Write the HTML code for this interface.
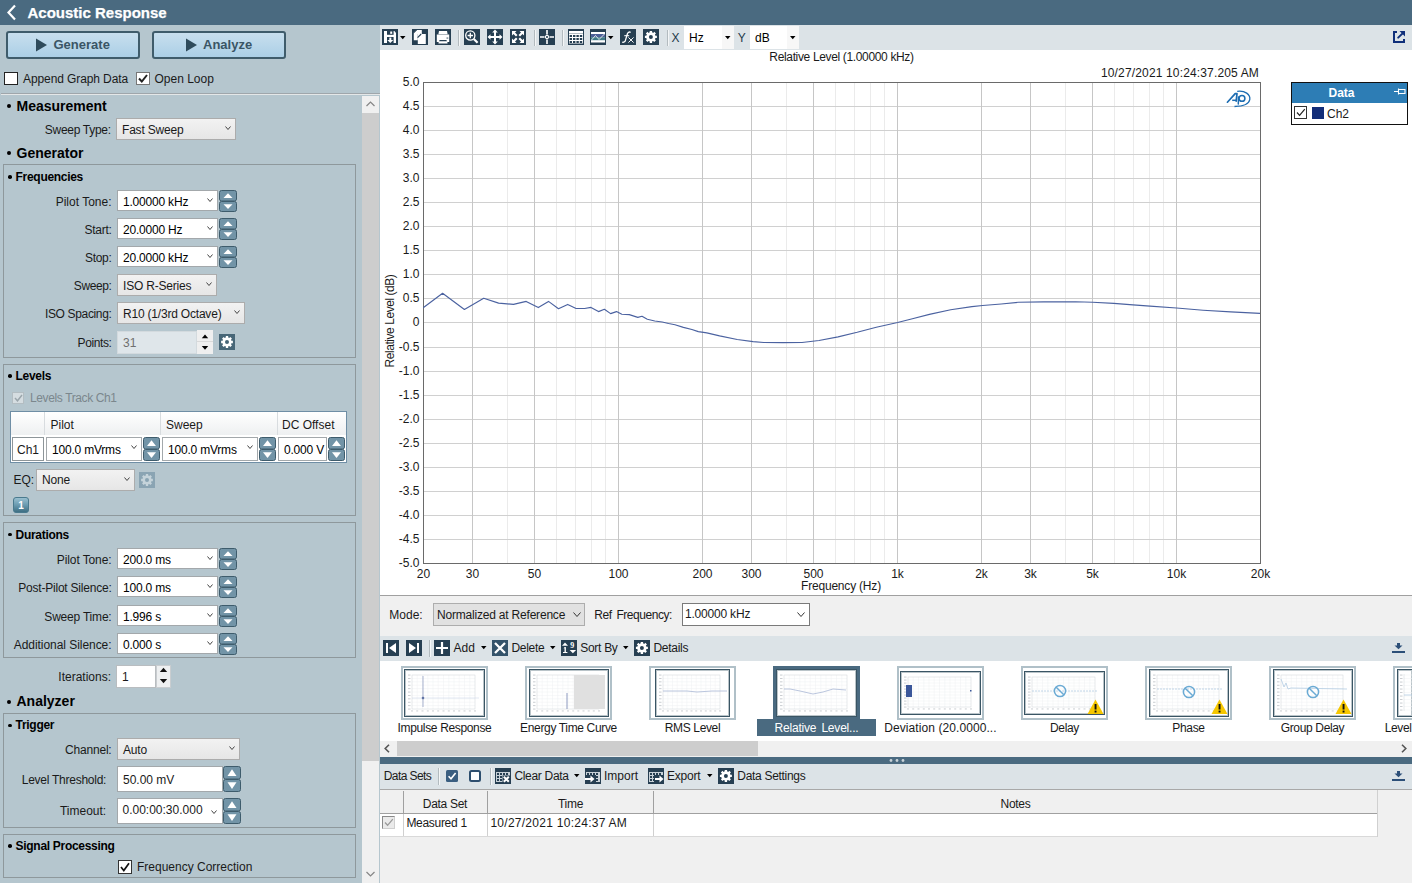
<!DOCTYPE html>
<html><head><meta charset="utf-8"><title>Acoustic Response</title>
<style>
*{box-sizing:border-box}
html,body{margin:0;padding:0}
body{width:1412px;height:883px;overflow:hidden;position:relative;font-family:"Liberation Sans",sans-serif;font-size:12px;color:#1a1a1a;background:#f0f0f0}
.a{position:absolute}
.t{position:absolute;white-space:nowrap;line-height:14px;font-size:12px}
.b{font-weight:bold}
svg{position:absolute;overflow:visible}
.inp{position:absolute;background:#fff;border:1px solid #9aa6ad}
.dd{position:absolute;background:linear-gradient(#f0f0f0,#e4e4e4);border:1px solid #acacac}
.chev{position:absolute;width:5px;height:5px;border-right:1px solid #555;border-bottom:1px solid #555;transform:rotate(45deg)}
.spin{position:absolute;width:17px;background:#7394a8;border:1px solid #4a6878;border-radius:2px}
.grp{position:absolute;border:1px solid #8f9a9f}
</style></head><body>
<div class="a" style="left:0px;top:0px;width:1412px;height:25px;background:#4a6a80"></div>
<svg style="left:6px;top:4px" width="12" height="17"><polyline points="9,1.5 2.5,8.5 9,15.5" fill="none" stroke="#fff" stroke-width="2.2"/></svg>
<div class="t" style="left:27.5px;top:3.60px;font-size:15px;line-height:18px;font-weight:bold;color:#fff;letter-spacing:0px;-webkit-text-stroke:0.25px #fff">Acoustic Response</div>
<div class="a" style="left:0px;top:25px;width:380px;height:858px;background:#b5c6ce"></div>
<div class="a" style="left:6px;top:31px;width:134px;height:28px;background:linear-gradient(#c8dfee,#abcfe6);border:2px solid #3f5c6b;border-radius:3px"></div>
<svg style="left:36px;top:38px" width="12" height="14"><polygon points="0,0.5 11,7 0,13.5" fill="#2f4b5b"/></svg>
<div class="t" style="left:53.5px;top:37.30px;font-size:13px;line-height:16px;font-weight:bold;color:#3a5565;">Generate</div>
<div class="a" style="left:152px;top:31px;width:134px;height:28px;background:linear-gradient(#c8dfee,#abcfe6);border:2px solid #3f5c6b;border-radius:3px"></div>
<svg style="left:185.7px;top:38px" width="12" height="14"><polygon points="0,0.5 11,7 0,13.5" fill="#2f4b5b"/></svg>
<div class="t" style="left:203px;top:37.30px;font-size:13px;line-height:16px;font-weight:bold;color:#3a5565;">Analyze</div>
<div class="a" style="left:4px;top:72px;width:14px;height:13px;background:#fff;border:1px solid #222"></div>
<div class="t" style="left:23px;top:71.84px;font-size:12px;line-height:14px;letter-spacing:-0.1px">Append Graph Data</div>
<div class="a" style="left:136px;top:72px;width:14px;height:13px;background:#fff;border:1px solid #777"></div>
<svg style="left:138px;top:74px" width="10" height="9"><polyline points="1,4.5 3.8,7.5 9,1" fill="none" stroke="#222" stroke-width="2"/></svg>
<div class="t" style="left:154.5px;top:71.84px;font-size:12px;line-height:14px;">Open Loop</div>
<div class="a" style="left:1px;top:93px;width:379px;height:1px;background:#9fa6ab"></div>
<div class="a" style="left:1px;top:94px;width:379px;height:1px;background:#e4e7e8"></div>
<div class="a" style="left:362px;top:96px;width:17px;height:787px;background:#f0f0f0"></div>
<div class="a" style="left:362px;top:113px;width:17px;height:648px;background:#cdcdcd"></div>
<svg style="left:366px;top:101px" width="9" height="6"><polyline points="0.5,5 4.5,1 8.5,5" fill="none" stroke="#858585" stroke-width="1.2"/></svg>
<svg style="left:366px;top:871px" width="9" height="6"><polyline points="0.5,1 4.5,5 8.5,1" fill="none" stroke="#858585" stroke-width="1.2"/></svg>
<div class="a" style="left:7px;top:104.2px;width:4px;height:4px;border-radius:50%;background:#000"></div>
<div class="t" style="left:16.5px;top:97.85px;font-size:14px;line-height:17px;font-weight:bold;color:#000;">Measurement</div>
<div class="t" style="left:-189.3px;width:300px;text-align:right;top:122.84px;font-size:12px;line-height:14px;letter-spacing:-0.3px">Sweep Type:</div>
<div class="a" style="left:116px;top:118px;width:120px;height:22px;background:linear-gradient(#f2f2f2,#e6e6e6);border:1px solid #acacac"></div>
<div class="t" style="left:122px;top:122.84px;font-size:12px;line-height:14px;letter-spacing:-0.2px">Fast Sweep</div>
<svg style="left:225px;top:126px" width="6" height="4"><polyline points="0.5,0.5 3.0,3.5 5.5,0.5" fill="none" stroke="#444" stroke-width="1"/></svg>
<div class="a" style="left:7px;top:151.4px;width:4px;height:4px;border-radius:50%;background:#000"></div>
<div class="t" style="left:16.5px;top:145.05px;font-size:14px;line-height:17px;font-weight:bold;color:#000;">Generator</div>
<div class="a" style="left:3px;top:164px;width:353px;height:194px;border:1px solid #8e989c"></div>
<div class="a" style="left:8px;top:175.3px;width:3.6px;height:3.6px;border-radius:50%;background:#000"></div>
<div class="t" style="left:15.6px;top:170.24px;font-size:12px;line-height:14px;font-weight:bold;color:#000;letter-spacing:-0.3px">Frequencies</div>
<div class="t" style="left:-188.5px;width:300px;text-align:right;top:194.84px;font-size:12px;line-height:14px;">Pilot Tone:</div>
<div class="a" style="left:117px;top:190px;width:101px;height:21px;background:#fff;border:1px solid #a3a8ab"></div>
<div class="t" style="left:123px;top:194.84px;font-size:12px;line-height:14px;color:#000;letter-spacing:-0.2px">1.00000 kHz</div>
<svg style="left:207px;top:198px" width="6" height="4"><polyline points="0.5,0.5 3.0,3.5 5.5,0.5" fill="none" stroke="#444" stroke-width="1"/></svg>
<svg style="left:219px;top:190px" width="18" height="22"><rect x="0.5" y="0.5" width="17" height="10.5" rx="2" fill="#7294a7" stroke="#3e5c6c"/><rect x="0.5" y="11.5" width="17" height="10.0" rx="2" fill="#7294a7" stroke="#3e5c6c"/><polygon points="4.5,8.0 9.0,3.2 13.5,8.0" fill="#fff"/><polygon points="4.5,14.2 9.0,19 13.5,14.2" fill="#fff"/></svg>
<div class="t" style="left:-188.5px;width:300px;text-align:right;top:222.84px;font-size:12px;line-height:14px;letter-spacing:-0.3px">Start:</div>
<div class="a" style="left:117px;top:218px;width:101px;height:21px;background:#fff;border:1px solid #a3a8ab"></div>
<div class="t" style="left:123px;top:222.84px;font-size:12px;line-height:14px;color:#000;letter-spacing:-0.2px">20.0000 Hz</div>
<svg style="left:207px;top:226px" width="6" height="4"><polyline points="0.5,0.5 3.0,3.5 5.5,0.5" fill="none" stroke="#444" stroke-width="1"/></svg>
<svg style="left:219px;top:218px" width="18" height="22"><rect x="0.5" y="0.5" width="17" height="10.5" rx="2" fill="#7294a7" stroke="#3e5c6c"/><rect x="0.5" y="11.5" width="17" height="10.0" rx="2" fill="#7294a7" stroke="#3e5c6c"/><polygon points="4.5,8.0 9.0,3.2 13.5,8.0" fill="#fff"/><polygon points="4.5,14.2 9.0,19 13.5,14.2" fill="#fff"/></svg>
<div class="t" style="left:-188.5px;width:300px;text-align:right;top:250.84px;font-size:12px;line-height:14px;letter-spacing:-0.3px">Stop:</div>
<div class="a" style="left:117px;top:246px;width:101px;height:21px;background:#fff;border:1px solid #a3a8ab"></div>
<div class="t" style="left:123px;top:250.84px;font-size:12px;line-height:14px;color:#000;letter-spacing:-0.2px">20.0000 kHz</div>
<svg style="left:207px;top:254px" width="6" height="4"><polyline points="0.5,0.5 3.0,3.5 5.5,0.5" fill="none" stroke="#444" stroke-width="1"/></svg>
<svg style="left:219px;top:246px" width="18" height="22"><rect x="0.5" y="0.5" width="17" height="10.5" rx="2" fill="#7294a7" stroke="#3e5c6c"/><rect x="0.5" y="11.5" width="17" height="10.0" rx="2" fill="#7294a7" stroke="#3e5c6c"/><polygon points="4.5,8.0 9.0,3.2 13.5,8.0" fill="#fff"/><polygon points="4.5,14.2 9.0,19 13.5,14.2" fill="#fff"/></svg>
<div class="t" style="left:-188.5px;width:300px;text-align:right;top:278.84px;font-size:12px;line-height:14px;letter-spacing:-0.4px">Sweep:</div>
<div class="a" style="left:117px;top:274px;width:100px;height:22px;background:linear-gradient(#f2f2f2,#e6e6e6);border:1px solid #acacac"></div>
<div class="t" style="left:123px;top:278.84px;font-size:12px;line-height:14px;letter-spacing:-0.2px">ISO R-Series</div>
<svg style="left:206px;top:282px" width="6" height="4"><polyline points="0.5,0.5 3.0,3.5 5.5,0.5" fill="none" stroke="#444" stroke-width="1"/></svg>
<div class="t" style="left:-188.5px;width:300px;text-align:right;top:306.84px;font-size:12px;line-height:14px;letter-spacing:-0.35px">ISO Spacing:</div>
<div class="a" style="left:117px;top:302px;width:128px;height:22px;background:linear-gradient(#f2f2f2,#e6e6e6);border:1px solid #acacac"></div>
<div class="t" style="left:123px;top:306.84px;font-size:12px;line-height:14px;letter-spacing:-0.2px">R10 (1/3rd Octave)</div>
<svg style="left:234px;top:310px" width="6" height="4"><polyline points="0.5,0.5 3.0,3.5 5.5,0.5" fill="none" stroke="#444" stroke-width="1"/></svg>
<div class="t" style="left:-188.5px;width:300px;text-align:right;top:335.84px;font-size:12px;line-height:14px;letter-spacing:-0.4px">Points:</div>
<div class="a" style="left:117px;top:331px;width:80px;height:23px;background:#dfe6ea;border:1px solid #d3dade"></div>
<div class="t" style="left:123px;top:335.84px;font-size:12px;line-height:14px;color:#707070;">31</div>
<div class="a" style="left:197px;top:330px;width:16px;height:24px;background:#efefef"></div>
<div class="a" style="left:197px;top:341px;width:16px;height:1px;background:#d9d9d9"></div>
<svg style="left:201px;top:334px" width="8" height="17"><polygon points="0.8,4.2 4,0.5 7.2,4.2" fill="#000"/><polygon points="0.8,12 4,15.7 7.2,12" fill="#000"/></svg>
<svg style="left:219px;top:334px" width="16" height="16"><rect width="16" height="16" fill="#476677"/><polygon points="12.35,6.85 13.88,6.83 13.88,9.17 12.35,9.15 11.89,10.26 12.99,11.33 11.33,12.99 10.26,11.89 9.15,12.35 9.17,13.88 6.83,13.88 6.85,12.35 5.74,11.89 4.67,12.99 3.01,11.33 4.11,10.26 3.65,9.15 2.12,9.17 2.12,6.83 3.65,6.85 4.11,5.74 3.01,4.67 4.67,3.01 5.74,4.11 6.85,3.65 6.83,2.12 9.17,2.12 9.15,3.65 10.26,4.11 11.33,3.01 12.99,4.67 11.89,5.74" fill="#fff"/><circle cx="8" cy="8" r="4.4" fill="#fff"/><circle cx="8" cy="8" r="2" fill="#476677"/></svg>
<div class="a" style="left:3px;top:364px;width:353px;height:152px;border:1px solid #8e989c"></div>
<div class="a" style="left:8px;top:374.1px;width:3.6px;height:3.6px;border-radius:50%;background:#000"></div>
<div class="t" style="left:15.6px;top:369.04px;font-size:12px;line-height:14px;font-weight:bold;color:#000;letter-spacing:-0.3px">Levels</div>
<div class="a" style="left:12px;top:392px;width:12px;height:12px;background:#d5dde1;border:1px solid #b3bdc2"></div>
<svg style="left:14px;top:394px" width="9" height="8"><polyline points="1,4 3.5,6.8 8,1" fill="none" stroke="#9aa5ab" stroke-width="1.4"/></svg>
<div class="t" style="left:30px;top:390.84px;font-size:12px;line-height:14px;color:#7b878d;letter-spacing:-0.38px">Levels Track Ch1</div>
<div class="a" style="left:10px;top:411px;width:337px;height:52px;background:#fff;border:1px solid #6f8ea5"></div>
<div class="a" style="left:11px;top:412px;width:335px;height:23px;background:linear-gradient(#ffffff,#eef0f1)"></div>
<div class="a" style="left:44px;top:412px;width:1px;height:23px;background:#d8dcdf"></div>
<div class="a" style="left:160px;top:412px;width:1px;height:23px;background:#d8dcdf"></div>
<div class="a" style="left:277px;top:412px;width:1px;height:23px;background:#d8dcdf"></div>
<div class="t" style="left:50.5px;top:418.04px;font-size:12px;line-height:14px;">Pilot</div>
<div class="t" style="left:166px;top:418.04px;font-size:12px;line-height:14px;">Sweep</div>
<div class="t" style="left:282px;top:418.04px;font-size:12px;line-height:14px;">DC Offset</div>
<div class="a" style="left:12px;top:437px;width:32px;height:24px;background:#fff;border:1px solid #8d9599"></div>
<div class="t" style="left:-272px;width:600px;text-align:center;top:443.34px;font-size:12px;line-height:14px;">Ch1</div>
<div class="a" style="left:46px;top:437px;width:96px;height:24px;background:#fff;border:1px solid #a3a8ab"></div>
<div class="t" style="left:52px;top:442.84px;font-size:12px;line-height:14px;color:#000;letter-spacing:-0.2px">100.0 mVrms</div>
<svg style="left:131px;top:445px" width="6" height="4"><polyline points="0.5,0.5 3.0,3.5 5.5,0.5" fill="none" stroke="#444" stroke-width="1"/></svg>
<svg style="left:143px;top:437px" width="17" height="24"><rect x="0.5" y="0.5" width="16" height="11.5" rx="2" fill="#7294a7" stroke="#3e5c6c"/><rect x="0.5" y="12.5" width="16" height="11.0" rx="2" fill="#7294a7" stroke="#3e5c6c"/><polygon points="4.0,9.0 8.5,3.2 13.0,9.0" fill="#fff"/><polygon points="4.0,15.2 8.5,21 13.0,15.2" fill="#fff"/></svg>
<div class="a" style="left:162px;top:437px;width:96px;height:24px;background:#fff;border:1px solid #a3a8ab"></div>
<div class="t" style="left:168px;top:442.84px;font-size:12px;line-height:14px;color:#000;letter-spacing:-0.2px">100.0 mVrms</div>
<svg style="left:247px;top:445px" width="6" height="4"><polyline points="0.5,0.5 3.0,3.5 5.5,0.5" fill="none" stroke="#444" stroke-width="1"/></svg>
<svg style="left:259px;top:437px" width="17" height="24"><rect x="0.5" y="0.5" width="16" height="11.5" rx="2" fill="#7294a7" stroke="#3e5c6c"/><rect x="0.5" y="12.5" width="16" height="11.0" rx="2" fill="#7294a7" stroke="#3e5c6c"/><polygon points="4.0,9.0 8.5,3.2 13.0,9.0" fill="#fff"/><polygon points="4.0,15.2 8.5,21 13.0,15.2" fill="#fff"/></svg>
<div class="a" style="left:278px;top:437px;width:49px;height:24px;background:#fff;border:1px solid #a3a8ab"></div>
<div class="t" style="left:284px;top:442.84px;font-size:12px;line-height:14px;color:#000;letter-spacing:-0.2px">0.000 V</div>
<svg style="left:328px;top:437px" width="17" height="24"><rect x="0.5" y="0.5" width="16" height="11.5" rx="2" fill="#7294a7" stroke="#3e5c6c"/><rect x="0.5" y="12.5" width="16" height="11.0" rx="2" fill="#7294a7" stroke="#3e5c6c"/><polygon points="4.0,9.0 8.5,3.2 13.0,9.0" fill="#fff"/><polygon points="4.0,15.2 8.5,21 13.0,15.2" fill="#fff"/></svg>
<div class="t" style="left:13.5px;top:473.24px;font-size:12px;line-height:14px;">EQ:</div>
<div class="a" style="left:36px;top:469px;width:99px;height:22px;background:linear-gradient(#f2f2f2,#e6e6e6);border:1px solid #acacac"></div>
<div class="t" style="left:42px;top:473.14px;font-size:12px;line-height:14px;letter-spacing:-0.2px">None</div>
<svg style="left:124px;top:477px" width="6" height="4"><polyline points="0.5,0.5 3.0,3.5 5.5,0.5" fill="none" stroke="#444" stroke-width="1"/></svg>
<svg style="left:139px;top:472px" width="16" height="16"><rect width="16" height="16" fill="#8aa4b3"/><polygon points="12.35,6.85 13.88,6.83 13.88,9.17 12.35,9.15 11.89,10.26 12.99,11.33 11.33,12.99 10.26,11.89 9.15,12.35 9.17,13.88 6.83,13.88 6.85,12.35 5.74,11.89 4.67,12.99 3.01,11.33 4.11,10.26 3.65,9.15 2.12,9.17 2.12,6.83 3.65,6.85 4.11,5.74 3.01,4.67 4.67,3.01 5.74,4.11 6.85,3.65 6.83,2.12 9.17,2.12 9.15,3.65 10.26,4.11 11.33,3.01 12.99,4.67 11.89,5.74" fill="#c5d3da"/><circle cx="8" cy="8" r="4.4" fill="#c5d3da"/><circle cx="8" cy="8" r="2" fill="#8aa4b3"/></svg>
<svg style="left:13px;top:497px" width="16" height="16"><defs><linearGradient id="g1" x1="0" y1="0" x2="0" y2="1"><stop offset="0" stop-color="#9cc2d2"/><stop offset="0.5" stop-color="#6a9bb0"/><stop offset="1" stop-color="#3b6c80"/></linearGradient></defs><rect x="0.5" y="0.5" width="15" height="15" rx="2.5" fill="url(#g1)" stroke="#4a7a8e"/><text x="8" y="12" font-family="Liberation Sans" font-size="10" font-weight="bold" fill="#fff" text-anchor="middle">1</text></svg>
<div class="a" style="left:3px;top:522px;width:353px;height:136px;border:1px solid #8e989c"></div>
<div class="a" style="left:8px;top:532.7px;width:3.6px;height:3.6px;border-radius:50%;background:#000"></div>
<div class="t" style="left:15.6px;top:527.64px;font-size:12px;line-height:14px;font-weight:bold;color:#000;letter-spacing:-0.3px">Durations</div>
<div class="t" style="left:-188.5px;width:300px;text-align:right;top:552.84px;font-size:12px;line-height:14px;letter-spacing:-0.1px">Pilot Tone:</div>
<div class="a" style="left:117px;top:548px;width:101px;height:21px;background:#fff;border:1px solid #a3a8ab"></div>
<div class="t" style="left:123px;top:552.84px;font-size:12px;line-height:14px;color:#000;letter-spacing:-0.2px">200.0 ms</div>
<svg style="left:207px;top:556px" width="6" height="4"><polyline points="0.5,0.5 3.0,3.5 5.5,0.5" fill="none" stroke="#444" stroke-width="1"/></svg>
<svg style="left:219px;top:548px" width="18" height="22"><rect x="0.5" y="0.5" width="17" height="10.5" rx="2" fill="#7294a7" stroke="#3e5c6c"/><rect x="0.5" y="11.5" width="17" height="10.0" rx="2" fill="#7294a7" stroke="#3e5c6c"/><polygon points="4.5,8.0 9.0,3.2 13.5,8.0" fill="#fff"/><polygon points="4.5,14.2 9.0,19 13.5,14.2" fill="#fff"/></svg>
<div class="t" style="left:-188.5px;width:300px;text-align:right;top:580.84px;font-size:12px;line-height:14px;letter-spacing:-0.22px">Post-Pilot Silence:</div>
<div class="a" style="left:117px;top:576px;width:101px;height:21px;background:#fff;border:1px solid #a3a8ab"></div>
<div class="t" style="left:123px;top:580.84px;font-size:12px;line-height:14px;color:#000;letter-spacing:-0.2px">100.0 ms</div>
<svg style="left:207px;top:584px" width="6" height="4"><polyline points="0.5,0.5 3.0,3.5 5.5,0.5" fill="none" stroke="#444" stroke-width="1"/></svg>
<svg style="left:219px;top:576px" width="18" height="22"><rect x="0.5" y="0.5" width="17" height="10.5" rx="2" fill="#7294a7" stroke="#3e5c6c"/><rect x="0.5" y="11.5" width="17" height="10.0" rx="2" fill="#7294a7" stroke="#3e5c6c"/><polygon points="4.5,8.0 9.0,3.2 13.5,8.0" fill="#fff"/><polygon points="4.5,14.2 9.0,19 13.5,14.2" fill="#fff"/></svg>
<div class="t" style="left:-188.5px;width:300px;text-align:right;top:609.84px;font-size:12px;line-height:14px;letter-spacing:-0.2px">Sweep Time:</div>
<div class="a" style="left:117px;top:605px;width:101px;height:21px;background:#fff;border:1px solid #a3a8ab"></div>
<div class="t" style="left:123px;top:609.84px;font-size:12px;line-height:14px;color:#000;letter-spacing:-0.2px">1.996 s</div>
<svg style="left:207px;top:613px" width="6" height="4"><polyline points="0.5,0.5 3.0,3.5 5.5,0.5" fill="none" stroke="#444" stroke-width="1"/></svg>
<svg style="left:219px;top:605px" width="18" height="22"><rect x="0.5" y="0.5" width="17" height="10.5" rx="2" fill="#7294a7" stroke="#3e5c6c"/><rect x="0.5" y="11.5" width="17" height="10.0" rx="2" fill="#7294a7" stroke="#3e5c6c"/><polygon points="4.5,8.0 9.0,3.2 13.5,8.0" fill="#fff"/><polygon points="4.5,14.2 9.0,19 13.5,14.2" fill="#fff"/></svg>
<div class="t" style="left:-188.5px;width:300px;text-align:right;top:637.84px;font-size:12px;line-height:14px;letter-spacing:-0.05px">Additional Silence:</div>
<div class="a" style="left:117px;top:633px;width:101px;height:21px;background:#fff;border:1px solid #a3a8ab"></div>
<div class="t" style="left:123px;top:637.84px;font-size:12px;line-height:14px;color:#000;letter-spacing:-0.2px">0.000 s</div>
<svg style="left:207px;top:641px" width="6" height="4"><polyline points="0.5,0.5 3.0,3.5 5.5,0.5" fill="none" stroke="#444" stroke-width="1"/></svg>
<svg style="left:219px;top:633px" width="18" height="22"><rect x="0.5" y="0.5" width="17" height="10.5" rx="2" fill="#7294a7" stroke="#3e5c6c"/><rect x="0.5" y="11.5" width="17" height="10.0" rx="2" fill="#7294a7" stroke="#3e5c6c"/><polygon points="4.5,8.0 9.0,3.2 13.5,8.0" fill="#fff"/><polygon points="4.5,14.2 9.0,19 13.5,14.2" fill="#fff"/></svg>
<div class="t" style="left:-189px;width:300px;text-align:right;top:669.84px;font-size:12px;line-height:14px;">Iterations:</div>
<div class="a" style="left:116px;top:665px;width:40px;height:23px;background:#fff;border:1px solid #b9bdc0"></div>
<div class="t" style="left:122px;top:669.84px;font-size:12px;line-height:14px;">1</div>
<div class="a" style="left:156px;top:665px;width:15px;height:23px;background:#eef0f1;border:1px solid #c9cdd0"></div>
<svg style="left:159px;top:667px" width="9" height="18"><polygon points="0.8,5 4.5,0.8 8.2,5" fill="#111"/><polygon points="0.8,12 4.5,16.2 8.2,12" fill="#111"/></svg>
<div class="a" style="left:7px;top:699.7px;width:4px;height:4px;border-radius:50%;background:#000"></div>
<div class="t" style="left:16.5px;top:693.35px;font-size:14px;line-height:17px;font-weight:bold;color:#000;">Analyzer</div>
<div class="a" style="left:3px;top:713px;width:353px;height:115px;border:1px solid #8e989c"></div>
<div class="a" style="left:8px;top:723.5px;width:3.6px;height:3.6px;border-radius:50%;background:#000"></div>
<div class="t" style="left:15.6px;top:718.44px;font-size:12px;line-height:14px;font-weight:bold;color:#000;letter-spacing:-0.3px">Trigger</div>
<div class="t" style="left:-188.5px;width:300px;text-align:right;top:743.34px;font-size:12px;line-height:14px;letter-spacing:-0.2px">Channel:</div>
<div class="a" style="left:117px;top:738px;width:123px;height:22px;background:linear-gradient(#f2f2f2,#e6e6e6);border:1px solid #acacac"></div>
<div class="t" style="left:123px;top:743.34px;font-size:12px;line-height:14px;letter-spacing:-0.2px">Auto</div>
<svg style="left:229px;top:746px" width="6" height="4"><polyline points="0.5,0.5 3.0,3.5 5.5,0.5" fill="none" stroke="#444" stroke-width="1"/></svg>
<div class="t" style="left:-193.8px;width:300px;text-align:right;top:773.34px;font-size:12px;line-height:14px;letter-spacing:-0.25px">Level Threshold:</div>
<div class="a" style="left:117px;top:766px;width:106px;height:26px;background:#fff;border:1px solid #a3a8ab"></div>
<div class="t" style="left:123px;top:772.84px;font-size:12px;line-height:14px;">50.00 mV</div>
<svg style="left:223px;top:766px" width="18" height="26"><rect x="0.5" y="0.5" width="17" height="12.5" rx="2" fill="#7294a7" stroke="#3e5c6c"/><rect x="0.5" y="13.5" width="17" height="12.0" rx="2" fill="#7294a7" stroke="#3e5c6c"/><polygon points="4.5,10.0 9.0,3.2 13.5,10.0" fill="#fff"/><polygon points="4.5,16.2 9.0,23 13.5,16.2" fill="#fff"/></svg>
<div class="t" style="left:-193.8px;width:300px;text-align:right;top:804.34px;font-size:12px;line-height:14px;">Timeout:</div>
<div class="a" style="left:117px;top:798px;width:106px;height:26px;background:#fff;border:1px solid #a3a8ab"></div>
<div class="t" style="left:122.5px;top:803.04px;font-size:12px;line-height:14px;">0.00:00:30.000</div>
<svg style="left:211px;top:810px" width="6" height="4"><polyline points="0.5,0.5 3.0,3.5 5.5,0.5" fill="none" stroke="#444" stroke-width="1"/></svg>
<svg style="left:223px;top:798px" width="18" height="26"><rect x="0.5" y="0.5" width="17" height="12.5" rx="2" fill="#7294a7" stroke="#3e5c6c"/><rect x="0.5" y="13.5" width="17" height="12.0" rx="2" fill="#7294a7" stroke="#3e5c6c"/><polygon points="4.5,10.0 9.0,3.2 13.5,10.0" fill="#fff"/><polygon points="4.5,16.2 9.0,23 13.5,16.2" fill="#fff"/></svg>
<div class="a" style="left:3px;top:834px;width:353px;height:44px;border:1px solid #8e989c"></div>
<div class="a" style="left:8px;top:844.1px;width:3.6px;height:3.6px;border-radius:50%;background:#000"></div>
<div class="t" style="left:15.6px;top:839.04px;font-size:12px;line-height:14px;font-weight:bold;color:#000;letter-spacing:-0.3px">Signal Processing</div>
<div class="a" style="left:118px;top:860px;width:14px;height:14px;background:#fff;border:1px solid #333"></div>
<svg style="left:120px;top:862px" width="10" height="10"><polyline points="1,5 3.8,8.5 9,1.2" fill="none" stroke="#111" stroke-width="1.7"/></svg>
<div class="t" style="left:137px;top:860.14px;font-size:12px;line-height:14px;">Frequency Correction</div>
<div class="a" style="left:380px;top:25px;width:1032px;height:25px;background:#dce3e7"></div>
<div class="a" style="left:380px;top:50px;width:1032px;height:545px;background:#fff"></div>
<svg style="left:382px;top:29px" width="16" height="16"><rect width="16" height="16" fill="#263f52"/><path d="M2,2 H12.3 L14,3.7 V14 H2 Z" fill="#fff"/><rect x="5" y="2" width="6.6" height="3.8" fill="#263f52"/><rect x="8.2" y="2.5" width="2" height="2.3" fill="#fff"/><rect x="5" y="8" width="6.6" height="6" fill="#263f52"/><rect x="7.3" y="8.6" width="2" height="2.6" fill="#fff"/><polygon points="5.3,10.9 11.3,10.9 8.3,13.9" fill="#fff"/></svg>
<svg style="left:400px;top:36px" width="6" height="4"><polygon points="0,0 5.5,0 2.75,3.2" fill="#000"/></svg>
<svg style="left:412px;top:29px" width="16" height="16"><rect width="16" height="16" fill="#263f52"/><path d="M1.8,3.8 L4.6,1 H9.8 V5 H5.8 V11.2 H1.8 Z" fill="#fff"/><path d="M5.8,5 H13.8 V15 H5.8 Z" fill="#fff"/><path d="M5.6,8.6 L9.2,5" stroke="#263f52" stroke-width="1.1"/><path d="M1.6,4.2 L5,0.8" stroke="#263f52" stroke-width="0.8"/></svg>
<svg style="left:435px;top:29px" width="16" height="16"><rect width="16" height="16" fill="#263f52"/><path d="M4,2 H12 L12.6,5.2 H3.4 Z" fill="#fff"/><path d="M1.8,5.5 H14.2 V13 H12 L11.5,11 H4.5 L4,13 H1.8 Z" fill="#fff"/><rect x="11.5" y="8.6" width="1.8" height="0.9" fill="#263f52"/><path d="M3.8,12.2 H12.2 L12.6,14.6 H3.4 Z" fill="#fff"/></svg>
<div class="a" style="left:458px;top:30px;width:1px;height:16px;background:#b3bbbf"></div>
<div class="a" style="left:459px;top:30px;width:1px;height:16px;background:#f4f6f7"></div>
<svg style="left:464px;top:29px" width="16" height="16"><rect width="16" height="16" fill="#263f52"/><circle cx="6.3" cy="6.5" r="4.6" fill="none" stroke="#fff" stroke-width="1.3"/><path d="M6.3,3.8 V9.2 M3.6,6.5 H9" stroke="#fff" stroke-width="1.3"/><path d="M9.8,10 L13.6,13.8" stroke="#fff" stroke-width="2.2"/></svg>
<svg style="left:487px;top:29px" width="16" height="16"><rect width="16" height="16" fill="#263f52"/><path d="M8,0.5 L10.8,3.5 H9 V7 H12.5 V5.2 L15.5,8 L12.5,10.8 V9 H9 V12.5 H10.8 L8,15.5 L5.2,12.5 H7 V9 H3.5 V10.8 L0.5,8 L3.5,5.2 V7 H7 V3.5 H5.2 Z" fill="#fff"/></svg>
<svg style="left:510px;top:29px" width="16" height="16"><rect width="16" height="16" fill="#263f52"/><path d="M2,2 H6.5 L5,3.5 L7.5,6 L6,7.5 L3.5,5 L2,6.5 Z M14,2 V6.5 L12.5,5 L10,7.5 L8.5,6 L11,3.5 L9.5,2 Z M2,14 V9.5 L3.5,11 L6,8.5 L7.5,10 L5,12.5 L6.5,14 Z M14,14 H9.5 L11,12.5 L8.5,10 L10,8.5 L12.5,11 L14,9.5 Z" fill="#fff"/></svg>
<div class="a" style="left:534px;top:30px;width:1px;height:16px;background:#b3bbbf"></div>
<div class="a" style="left:535px;top:30px;width:1px;height:16px;background:#f4f6f7"></div>
<svg style="left:539px;top:29px" width="16" height="16"><rect width="16" height="16" fill="#263f52"/><path d="M8,1 V5.5 M8,10.5 V15 M1,8 H5.5 M10.5,8 H15" stroke="#fff" stroke-width="1.6"/><circle cx="8" cy="8" r="1.6" fill="none" stroke="#fff" stroke-width="1.1"/></svg>
<div class="a" style="left:562px;top:30px;width:1px;height:16px;background:#b3bbbf"></div>
<div class="a" style="left:563px;top:30px;width:1px;height:16px;background:#f4f6f7"></div>
<svg style="left:568px;top:29px" width="16" height="16"><rect width="16" height="16" fill="#263f52"/><rect x="1" y="2" width="14" height="12.5" fill="#fff"/><rect x="1" y="4" width="14" height="0.9" fill="#aab4ba"/><rect x="1.6" y="6.0" width="2.4" height="2" fill="#263f52"/><rect x="5.0" y="6.0" width="2.4" height="2" fill="#263f52"/><rect x="8.4" y="6.0" width="2.4" height="2" fill="#263f52"/><rect x="11.8" y="6.0" width="2.4" height="2" fill="#263f52"/><rect x="1.6" y="9.0" width="2.4" height="2" fill="#263f52"/><rect x="5.0" y="9.0" width="2.4" height="2" fill="#263f52"/><rect x="8.4" y="9.0" width="2.4" height="2" fill="#263f52"/><rect x="11.8" y="9.0" width="2.4" height="2" fill="#263f52"/><rect x="1.6" y="12.0" width="2.4" height="2" fill="#263f52"/><rect x="5.0" y="12.0" width="2.4" height="2" fill="#263f52"/><rect x="8.4" y="12.0" width="2.4" height="2" fill="#263f52"/><rect x="11.8" y="12.0" width="2.4" height="2" fill="#263f52"/></svg>
<svg style="left:590px;top:29px" width="16" height="16"><rect width="16" height="16" fill="#263f52"/><rect x="1" y="3" width="14" height="10.5" fill="#fff"/><rect x="1" y="5" width="14" height="3.2" fill="#4c5f96"/><rect x="1" y="8.2" width="14" height="3" fill="#3f7a86"/><polyline points="1.5,11 5.5,6.5 9,10.5 14.5,5" fill="none" stroke="#fff" stroke-width="0.8"/></svg>
<svg style="left:608px;top:36px" width="6" height="4"><polygon points="0,0 5.5,0 2.75,3.2" fill="#000"/></svg>
<svg style="left:620px;top:29px" width="16" height="16"><rect width="16" height="16" fill="#263f52"/><path d="M10.6,3.4 C9.6,2.6 8.2,3 7.5,4.6 L5.4,11.4 C4.8,13 3.6,13.6 2.3,13.1" fill="none" stroke="#fff" stroke-width="1.3"/><path d="M4.3,6.7 H9.2" stroke="#fff" stroke-width="1.1"/><path d="M8.4,8.4 L13.6,13.6 M13.6,8.4 L8.4,13.6" stroke="#fff" stroke-width="0.95"/></svg>
<svg style="left:643px;top:29px" width="16" height="16"><rect width="16" height="16" fill="#263f52"/><polygon points="12.35,6.72 13.88,6.71 13.88,9.09 12.35,9.08 11.88,10.21 12.97,11.29 11.29,12.97 10.21,11.88 9.08,12.35 9.09,13.88 6.71,13.88 6.72,12.35 5.59,11.88 4.51,12.97 2.83,11.29 3.92,10.21 3.45,9.08 1.92,9.09 1.92,6.71 3.45,6.72 3.92,5.59 2.83,4.51 4.51,2.83 5.59,3.92 6.72,3.45 6.71,1.92 9.09,1.92 9.08,3.45 10.21,3.92 11.29,2.83 12.97,4.51 11.88,5.59" fill="#fff"/><circle cx="7.9" cy="7.9" r="4.5" fill="#fff"/><circle cx="7.9" cy="7.9" r="2" fill="#263f52"/></svg>
<div class="a" style="left:667px;top:30px;width:1px;height:16px;background:#b3bbbf"></div>
<div class="a" style="left:668px;top:30px;width:1px;height:16px;background:#f4f6f7"></div>
<div class="t" style="left:671.5px;top:31.34px;font-size:12px;line-height:14px;color:#1f3a4a;">X</div>
<div class="a" style="left:684px;top:26px;width:50px;height:23px;background:#fff"></div>
<div class="a" style="left:722px;top:26px;width:12px;height:23px;background:#f7f7f7"></div>
<div class="t" style="left:689px;top:30.84px;font-size:12px;line-height:14px;color:#000;">Hz</div>
<svg style="left:725px;top:36px" width="6" height="4"><polygon points="0,0 5.5,0 2.75,3.2" fill="#000"/></svg>
<div class="t" style="left:737.8px;top:31.34px;font-size:12px;line-height:14px;color:#1f3a4a;">Y</div>
<div class="a" style="left:750px;top:26px;width:49px;height:23px;background:#fff"></div>
<div class="a" style="left:787px;top:26px;width:12px;height:23px;background:#f7f7f7"></div>
<div class="t" style="left:755px;top:30.84px;font-size:12px;line-height:14px;color:#000;">dB</div>
<svg style="left:790px;top:36px" width="6" height="4"><polygon points="0,0 5.5,0 2.75,3.2" fill="#000"/></svg>
<svg style="left:1393px;top:31px" width="12" height="12"><path d="M4,1 H1 V11 H11 V8" fill="none" stroke="#0f2f7a" stroke-width="2"/><polygon points="6.5,0 12,0 12,5.5" fill="#0f2f7a"/><path d="M5.2,6.6 L9.6,2.4" stroke="#0f2f7a" stroke-width="2" stroke-linecap="round"/></svg>
<div class="t" style="left:541.5px;width:600px;text-align:center;top:49.84px;font-size:12px;line-height:14px;letter-spacing:-0.35px">Relative Level (1.00000 kHz)</div>
<div class="t" style="left:959px;width:300px;text-align:right;top:66.04px;font-size:12px;line-height:14px;letter-spacing:0.15px">10/27/2021 10:24:37.205 AM</div>
<svg style="left:0;top:0" width="1412" height="883"><line x1="507.5" y1="82" x2="507.5" y2="563" stroke="#ebebeb"/><line x1="556.5" y1="82" x2="556.5" y2="563" stroke="#ebebeb"/><line x1="575.5" y1="82" x2="575.5" y2="563" stroke="#ebebeb"/><line x1="591.5" y1="82" x2="591.5" y2="563" stroke="#ebebeb"/><line x1="605.5" y1="82" x2="605.5" y2="563" stroke="#ebebeb"/><line x1="786.5" y1="82" x2="786.5" y2="563" stroke="#ebebeb"/><line x1="835.5" y1="82" x2="835.5" y2="563" stroke="#ebebeb"/><line x1="854.5" y1="82" x2="854.5" y2="563" stroke="#ebebeb"/><line x1="870.5" y1="82" x2="870.5" y2="563" stroke="#ebebeb"/><line x1="884.5" y1="82" x2="884.5" y2="563" stroke="#ebebeb"/><line x1="1065.5" y1="82" x2="1065.5" y2="563" stroke="#ebebeb"/><line x1="1114.5" y1="82" x2="1114.5" y2="563" stroke="#ebebeb"/><line x1="1133.5" y1="82" x2="1133.5" y2="563" stroke="#ebebeb"/><line x1="1149.5" y1="82" x2="1149.5" y2="563" stroke="#ebebeb"/><line x1="1163.5" y1="82" x2="1163.5" y2="563" stroke="#ebebeb"/><line x1="423" y1="106.5" x2="1260" y2="106.5" stroke="#d0d0d0"/><line x1="423" y1="130.5" x2="1260" y2="130.5" stroke="#d0d0d0"/><line x1="423" y1="154.5" x2="1260" y2="154.5" stroke="#d0d0d0"/><line x1="423" y1="178.5" x2="1260" y2="178.5" stroke="#d0d0d0"/><line x1="423" y1="202.5" x2="1260" y2="202.5" stroke="#d0d0d0"/><line x1="423" y1="226.5" x2="1260" y2="226.5" stroke="#d0d0d0"/><line x1="423" y1="250.5" x2="1260" y2="250.5" stroke="#d0d0d0"/><line x1="423" y1="274.5" x2="1260" y2="274.5" stroke="#d0d0d0"/><line x1="423" y1="298.5" x2="1260" y2="298.5" stroke="#d0d0d0"/><line x1="423" y1="322.5" x2="1260" y2="322.5" stroke="#d0d0d0"/><line x1="423" y1="347.5" x2="1260" y2="347.5" stroke="#d0d0d0"/><line x1="423" y1="371.5" x2="1260" y2="371.5" stroke="#d0d0d0"/><line x1="423" y1="395.5" x2="1260" y2="395.5" stroke="#d0d0d0"/><line x1="423" y1="419.5" x2="1260" y2="419.5" stroke="#d0d0d0"/><line x1="423" y1="443.5" x2="1260" y2="443.5" stroke="#d0d0d0"/><line x1="423" y1="467.5" x2="1260" y2="467.5" stroke="#d0d0d0"/><line x1="423" y1="491.5" x2="1260" y2="491.5" stroke="#d0d0d0"/><line x1="423" y1="515.5" x2="1260" y2="515.5" stroke="#d0d0d0"/><line x1="423" y1="539.5" x2="1260" y2="539.5" stroke="#d0d0d0"/><line x1="472.5" y1="82" x2="472.5" y2="563" stroke="#c6c6c6"/><line x1="534.5" y1="82" x2="534.5" y2="563" stroke="#c6c6c6"/><line x1="618.5" y1="82" x2="618.5" y2="563" stroke="#c6c6c6"/><line x1="702.5" y1="82" x2="702.5" y2="563" stroke="#c6c6c6"/><line x1="751.5" y1="82" x2="751.5" y2="563" stroke="#c6c6c6"/><line x1="813.5" y1="82" x2="813.5" y2="563" stroke="#c6c6c6"/><line x1="897.5" y1="82" x2="897.5" y2="563" stroke="#c6c6c6"/><line x1="981.5" y1="82" x2="981.5" y2="563" stroke="#c6c6c6"/><line x1="1030.5" y1="82" x2="1030.5" y2="563" stroke="#c6c6c6"/><line x1="1092.5" y1="82" x2="1092.5" y2="563" stroke="#c6c6c6"/><line x1="1176.5" y1="82" x2="1176.5" y2="563" stroke="#c6c6c6"/><rect x="423.5" y="82.5" width="837" height="481" fill="none" stroke="#6a6a6a"/><polyline points="423.2,307.8 442.6,293.3 464.4,309.5 483.7,298.3 498.6,303.1 513.5,304.4 526.2,301.4 538.3,307.6 548.5,301.4 558.5,308.7 567.7,304.4 576.1,308.5 584.6,308.5 591.0,307.4 598.5,311.6 604.4,309.3 610.6,313.6 616.5,311.6 621.8,314.2 629.3,314.6 637.8,317.4 642.0,316.3 647.3,319.3 654.8,321.0 662.2,322.0 668.6,323.5 675.0,324.8 683.4,327.4 691.9,329.5 698.3,331.6 706.8,332.9 719.6,335.9 737.2,339.5 753.1,341.6 763.7,342.5 783.0,342.6 802.0,342.5 819.0,340.5 838.1,336.9 857.2,332.3 876.3,327.2 897.6,322.5 912.4,318.7 929.4,314.4 950.7,309.7 971.9,306.6 982.6,305.5 1001.2,304.0 1018.2,302.3 1043.7,301.9 1075.6,301.7 1092.6,302.3 1113.8,303.4 1133.0,304.9 1150.0,306.1 1176.5,308.0 1203.1,310.2 1230.7,311.9 1260.0,313.4" fill="none" stroke="#4b62a0" stroke-width="1.15" stroke-linejoin="round"/><g transform="translate(1220,85)" fill="none" stroke="#1d6db2"><path d="M7.4,17.2 L15.2,8.6 H17 L16.2,16.2" stroke-width="1.7" stroke-linejoin="round" stroke-linecap="round"/><path d="M12.2,15.3 H16.6" stroke-width="1.5"/><path d="M18.5,12 L18.3,19" stroke-width="1.5" stroke-linecap="round"/><ellipse cx="22" cy="13.4" rx="2.9" ry="2.9" stroke-width="1.5"/><path d="M17.2,6.3 C25,5.2 30.5,9.5 29.8,14.5 C29,19 23,21.3 14.5,21.5" stroke-width="1.3"/></g></svg>
<div class="t" style="left:119.5px;width:300px;text-align:right;top:74.74px;font-size:12px;line-height:14px;">5.0</div>
<div class="t" style="left:119.5px;width:300px;text-align:right;top:98.74px;font-size:12px;line-height:14px;">4.5</div>
<div class="t" style="left:119.5px;width:300px;text-align:right;top:122.74px;font-size:12px;line-height:14px;">4.0</div>
<div class="t" style="left:119.5px;width:300px;text-align:right;top:146.74px;font-size:12px;line-height:14px;">3.5</div>
<div class="t" style="left:119.5px;width:300px;text-align:right;top:170.74px;font-size:12px;line-height:14px;">3.0</div>
<div class="t" style="left:119.5px;width:300px;text-align:right;top:194.74px;font-size:12px;line-height:14px;">2.5</div>
<div class="t" style="left:119.5px;width:300px;text-align:right;top:218.74px;font-size:12px;line-height:14px;">2.0</div>
<div class="t" style="left:119.5px;width:300px;text-align:right;top:242.74px;font-size:12px;line-height:14px;">1.5</div>
<div class="t" style="left:119.5px;width:300px;text-align:right;top:266.74px;font-size:12px;line-height:14px;">1.0</div>
<div class="t" style="left:119.5px;width:300px;text-align:right;top:290.74px;font-size:12px;line-height:14px;">0.5</div>
<div class="t" style="left:119.5px;width:300px;text-align:right;top:314.74px;font-size:12px;line-height:14px;">0</div>
<div class="t" style="left:119.5px;width:300px;text-align:right;top:339.74px;font-size:12px;line-height:14px;">-0.5</div>
<div class="t" style="left:119.5px;width:300px;text-align:right;top:363.74px;font-size:12px;line-height:14px;">-1.0</div>
<div class="t" style="left:119.5px;width:300px;text-align:right;top:387.74px;font-size:12px;line-height:14px;">-1.5</div>
<div class="t" style="left:119.5px;width:300px;text-align:right;top:411.74px;font-size:12px;line-height:14px;">-2.0</div>
<div class="t" style="left:119.5px;width:300px;text-align:right;top:435.74px;font-size:12px;line-height:14px;">-2.5</div>
<div class="t" style="left:119.5px;width:300px;text-align:right;top:459.74px;font-size:12px;line-height:14px;">-3.0</div>
<div class="t" style="left:119.5px;width:300px;text-align:right;top:483.74px;font-size:12px;line-height:14px;">-3.5</div>
<div class="t" style="left:119.5px;width:300px;text-align:right;top:507.74px;font-size:12px;line-height:14px;">-4.0</div>
<div class="t" style="left:119.5px;width:300px;text-align:right;top:531.74px;font-size:12px;line-height:14px;">-4.5</div>
<div class="t" style="left:119.5px;width:300px;text-align:right;top:555.74px;font-size:12px;line-height:14px;">-5.0</div>
<div class="t" style="left:123.5px;width:600px;text-align:center;top:567.34px;font-size:12px;line-height:14px;">20</div>
<div class="t" style="left:172.5px;width:600px;text-align:center;top:567.34px;font-size:12px;line-height:14px;">30</div>
<div class="t" style="left:234.5px;width:600px;text-align:center;top:567.34px;font-size:12px;line-height:14px;">50</div>
<div class="t" style="left:318.5px;width:600px;text-align:center;top:567.34px;font-size:12px;line-height:14px;">100</div>
<div class="t" style="left:402.5px;width:600px;text-align:center;top:567.34px;font-size:12px;line-height:14px;">200</div>
<div class="t" style="left:451.5px;width:600px;text-align:center;top:567.34px;font-size:12px;line-height:14px;">300</div>
<div class="t" style="left:513.5px;width:600px;text-align:center;top:567.34px;font-size:12px;line-height:14px;">500</div>
<div class="t" style="left:597.5px;width:600px;text-align:center;top:567.34px;font-size:12px;line-height:14px;">1k</div>
<div class="t" style="left:681.5px;width:600px;text-align:center;top:567.34px;font-size:12px;line-height:14px;">2k</div>
<div class="t" style="left:730.5px;width:600px;text-align:center;top:567.34px;font-size:12px;line-height:14px;">3k</div>
<div class="t" style="left:792.5px;width:600px;text-align:center;top:567.34px;font-size:12px;line-height:14px;">5k</div>
<div class="t" style="left:876.5px;width:600px;text-align:center;top:567.34px;font-size:12px;line-height:14px;">10k</div>
<div class="t" style="left:960.5px;width:600px;text-align:center;top:567.34px;font-size:12px;line-height:14px;">20k</div>
<div class="t" style="left:541px;width:600px;text-align:center;top:578.84px;font-size:12px;line-height:14px;letter-spacing:-0.2px">Frequency (Hz)</div>
<div class="t" style="left:340px;top:314px;width:100px;height:14px;text-align:center;transform:rotate(-90deg);font-size:12px;line-height:14px;letter-spacing:-0.45px">Relative Level (dB)</div>
<div class="a" style="left:1291px;top:82px;width:117px;height:43px;background:#fff;border:1px solid #111"></div>
<div class="a" style="left:1292px;top:83px;width:115px;height:20px;background:#2d7db5"></div>
<div class="t" style="left:1041.5px;width:600px;text-align:center;top:86.44px;font-size:12px;line-height:14px;font-weight:bold;color:#fff;">Data</div>
<svg style="left:1394px;top:88px" width="12" height="8"><path d="M0,3.5 H4.5 M4.5,0.5 V6.5 M4.5,1.5 H11 V5.5 H4.5" fill="none" stroke="#fff" stroke-width="1.1"/></svg>
<div class="a" style="left:1294px;top:106px;width:13px;height:13px;background:#fff;border:1px solid #333"></div>
<svg style="left:1296px;top:108px" width="10" height="9"><polyline points="1,4.5 3.6,7.3 8.8,1.2" fill="none" stroke="#222" stroke-width="1.2"/></svg>
<div class="a" style="left:1312px;top:107px;width:12px;height:12px;background:#122d78"></div>
<div class="t" style="left:1327px;top:106.84px;font-size:12px;line-height:14px;">Ch2</div>
<div class="a" style="left:380px;top:595px;width:1032px;height:1px;background:#a0a0a0"></div>
<div class="a" style="left:380px;top:596px;width:1032px;height:40px;background:#f0f0f0"></div>
<div class="t" style="left:389.3px;top:607.64px;font-size:12px;line-height:14px;">Mode:</div>
<div class="a" style="left:433px;top:603px;width:152px;height:23px;background:#e1e1e1;border:1px solid #adadad"></div>
<div class="t" style="left:437px;top:607.6px;width:129px;overflow:hidden;letter-spacing:-0.2px">Normalized at Reference</div>
<svg style="left:572.5px;top:612px" width="8" height="5"><polyline points="0.5,0.5 4.0,4.5 7.5,0.5" fill="none" stroke="#333" stroke-width="1"/></svg>
<div class="t" style="left:594.2px;top:607.84px;font-size:12px;line-height:14px;letter-spacing:-0.45px;word-spacing:2px">Ref Frequency:</div>
<div class="a" style="left:682px;top:603px;width:128px;height:23px;background:#fff;border:1px solid #7a7a7a"></div>
<div class="t" style="left:685px;top:607.44px;font-size:12px;line-height:14px;letter-spacing:-0.2px">1.00000 kHz</div>
<svg style="left:796.5px;top:612px" width="8" height="5"><polyline points="0.5,0.5 4.0,4.5 7.5,0.5" fill="none" stroke="#333" stroke-width="1"/></svg>
<div class="a" style="left:380px;top:636px;width:1032px;height:25px;background:#dce3e7"></div>
<svg style="left:383px;top:640px" width="16" height="16"><rect width="16" height="16" fill="#263f52"/><rect x="3" y="3" width="2" height="10" fill="#fff"/><polygon points="13,3 13,13 6,8" fill="#fff"/></svg>
<svg style="left:406px;top:640px" width="16" height="16"><rect width="16" height="16" fill="#263f52"/><rect x="11" y="3" width="2" height="10" fill="#fff"/><polygon points="3,3 3,13 10,8" fill="#fff"/></svg>
<div class="a" style="left:429px;top:640px;width:1px;height:17px;background:#b3bbbf"></div>
<div class="a" style="left:430px;top:640px;width:1px;height:17px;background:#f4f6f7"></div>
<svg style="left:434px;top:640px" width="16" height="16"><rect width="16" height="16" fill="#263f52"/><path d="M8,2 V14 M2,8 H14" stroke="#fff" stroke-width="2.2"/></svg>
<div class="t" style="left:453.5px;top:640.84px;font-size:12px;line-height:14px;">Add</div>
<svg style="left:481px;top:646px" width="6" height="4"><polygon points="0,0 5.5,0 2.75,3.2" fill="#000"/></svg>
<svg style="left:492px;top:640px" width="16" height="16"><rect width="16" height="16" fill="#34536a"/><path d="M3,3 L13,13 M13,3 L3,13" stroke="#fff" stroke-width="2.3"/></svg>
<div class="t" style="left:511.5px;top:640.84px;font-size:12px;line-height:14px;letter-spacing:-0.3px">Delete</div>
<svg style="left:549.5px;top:646px" width="6" height="4"><polygon points="0,0 5.5,0 2.75,3.2" fill="#000"/></svg>
<svg style="left:561px;top:640px" width="16" height="16"><rect width="16" height="16" fill="#263f52"/><path d="M1,5.8 L4,2.6 L7,5.8 Z" fill="#fff"/><path d="M3.2,7.2 L4.9,6.9 V12 H6.4 V13 H2 V12 H3.5 V8.2 L2.6,8.4 Z" fill="#fff"/><text x="11.3" y="7.9" font-family="Liberation Serif" font-size="8" font-weight="bold" fill="#fff" text-anchor="middle">9</text><path d="M8.6,9.9 H15.1 L11.85,13.3 Z" fill="#fff"/></svg>
<div class="t" style="left:580.3px;top:640.84px;font-size:12px;line-height:14px;letter-spacing:-0.3px">Sort By</div>
<svg style="left:623px;top:646px" width="6" height="4"><polygon points="0,0 5.5,0 2.75,3.2" fill="#000"/></svg>
<svg style="left:634px;top:640px" width="16" height="16"><rect width="16" height="16" fill="#263f52"/><polygon points="12.35,6.72 13.88,6.71 13.88,9.09 12.35,9.08 11.88,10.21 12.97,11.29 11.29,12.97 10.21,11.88 9.08,12.35 9.09,13.88 6.71,13.88 6.72,12.35 5.59,11.88 4.51,12.97 2.83,11.29 3.92,10.21 3.45,9.08 1.92,9.09 1.92,6.71 3.45,6.72 3.92,5.59 2.83,4.51 4.51,2.83 5.59,3.92 6.72,3.45 6.71,1.92 9.09,1.92 9.08,3.45 10.21,3.92 11.29,2.83 12.97,4.51 11.88,5.59" fill="#fff"/><circle cx="7.9" cy="7.9" r="4.5" fill="#fff"/><circle cx="7.9" cy="7.9" r="2" fill="#263f52"/></svg>
<div class="t" style="left:653.5px;top:640.84px;font-size:12px;line-height:14px;letter-spacing:-0.3px">Details</div>
<svg style="left:1392px;top:643px" width="14" height="11"><rect x="5" y="0" width="3" height="3" fill="#2c4f78"/><polygon points="2.5,2.5 10.5,2.5 6.5,6.3" fill="#2c4f78"/><rect x="0" y="8" width="13" height="2" fill="#2c4f78"/></svg>
<div class="a" style="left:380px;top:661px;width:1032px;height:80px;background:#fff"></div>
<div class="a" style="left:401px;top:666px;width:87px;height:54px;background:#fff;border:2px solid #b0c0c8"></div>
<div class="a" style="left:404px;top:669px;width:81px;height:48px;background:#fff;border:1px solid #3a5564;box-shadow:inset 0 0 0 1px rgba(58,85,100,0.35)"></div>
<svg style="left:406px;top:671px" width="77" height="44"><rect width="77" height="44" fill="#fff"/><line x1="6" y1="7.4" x2="69" y2="7.4" stroke="#eef0f2" stroke-width="0.5"/><line x1="6" y1="10.8" x2="69" y2="10.8" stroke="#eef0f2" stroke-width="0.5"/><line x1="6" y1="14.2" x2="69" y2="14.2" stroke="#eef0f2" stroke-width="0.5"/><line x1="6" y1="17.6" x2="69" y2="17.6" stroke="#eef0f2" stroke-width="0.5"/><line x1="6" y1="21.0" x2="69" y2="21.0" stroke="#eef0f2" stroke-width="0.5"/><line x1="6" y1="24.4" x2="69" y2="24.4" stroke="#eef0f2" stroke-width="0.5"/><line x1="6" y1="27.8" x2="69" y2="27.8" stroke="#eef0f2" stroke-width="0.5"/><line x1="6" y1="31.2" x2="69" y2="31.2" stroke="#eef0f2" stroke-width="0.5"/><line x1="6" y1="34.6" x2="69" y2="34.6" stroke="#eef0f2" stroke-width="0.5"/><line x1="11.2" y1="4" x2="11.2" y2="38" stroke="#eef0f2" stroke-width="0.5"/><line x1="16.5" y1="4" x2="16.5" y2="38" stroke="#eef0f2" stroke-width="0.5"/><line x1="21.8" y1="4" x2="21.8" y2="38" stroke="#eef0f2" stroke-width="0.5"/><line x1="27.0" y1="4" x2="27.0" y2="38" stroke="#eef0f2" stroke-width="0.5"/><line x1="32.2" y1="4" x2="32.2" y2="38" stroke="#eef0f2" stroke-width="0.5"/><line x1="37.5" y1="4" x2="37.5" y2="38" stroke="#eef0f2" stroke-width="0.5"/><line x1="42.8" y1="4" x2="42.8" y2="38" stroke="#eef0f2" stroke-width="0.5"/><line x1="48.0" y1="4" x2="48.0" y2="38" stroke="#eef0f2" stroke-width="0.5"/><line x1="53.2" y1="4" x2="53.2" y2="38" stroke="#eef0f2" stroke-width="0.5"/><line x1="58.5" y1="4" x2="58.5" y2="38" stroke="#eef0f2" stroke-width="0.5"/><line x1="63.8" y1="4" x2="63.8" y2="38" stroke="#eef0f2" stroke-width="0.5"/><rect x="6" y="4" width="63" height="34" fill="none" stroke="#cfd4d8" stroke-width="0.5"/><rect x="2" y="3.6" width="2.5" height="0.9" fill="#c4c8cc"/><rect x="2" y="7.0" width="2.5" height="0.9" fill="#c4c8cc"/><rect x="2" y="10.4" width="2.5" height="0.9" fill="#c4c8cc"/><rect x="2" y="13.8" width="2.5" height="0.9" fill="#c4c8cc"/><rect x="2" y="17.2" width="2.5" height="0.9" fill="#c4c8cc"/><rect x="2" y="20.6" width="2.5" height="0.9" fill="#c4c8cc"/><rect x="2" y="24.0" width="2.5" height="0.9" fill="#c4c8cc"/><rect x="2" y="27.4" width="2.5" height="0.9" fill="#c4c8cc"/><rect x="2" y="30.8" width="2.5" height="0.9" fill="#c4c8cc"/><rect x="2" y="34.2" width="2.5" height="0.9" fill="#c4c8cc"/><rect x="2" y="37.6" width="2.5" height="0.9" fill="#c4c8cc"/><rect x="5.0" y="39.5" width="2" height="0.9" fill="#c4c8cc"/><rect x="10.2" y="39.5" width="2" height="0.9" fill="#c4c8cc"/><rect x="15.5" y="39.5" width="2" height="0.9" fill="#c4c8cc"/><rect x="20.8" y="39.5" width="2" height="0.9" fill="#c4c8cc"/><rect x="26.0" y="39.5" width="2" height="0.9" fill="#c4c8cc"/><rect x="31.2" y="39.5" width="2" height="0.9" fill="#c4c8cc"/><rect x="36.5" y="39.5" width="2" height="0.9" fill="#c4c8cc"/><rect x="41.8" y="39.5" width="2" height="0.9" fill="#c4c8cc"/><rect x="47.0" y="39.5" width="2" height="0.9" fill="#c4c8cc"/><rect x="52.2" y="39.5" width="2" height="0.9" fill="#c4c8cc"/><rect x="57.5" y="39.5" width="2" height="0.9" fill="#c4c8cc"/><rect x="62.8" y="39.5" width="2" height="0.9" fill="#c4c8cc"/><rect x="68.0" y="39.5" width="2" height="0.9" fill="#c4c8cc"/><line x1="17" y1="5" x2="17" y2="36" stroke="#7080b0" stroke-width="0.6"/><circle cx="17" cy="27" r="1.3" fill="#3f5590"/><line x1="6" y1="27" x2="73" y2="27" stroke="#c5d0e4" stroke-width="0.5"/></svg>
<div class="t" style="left:144.5px;width:600px;text-align:center;top:720.74px;font-size:12px;line-height:14px;letter-spacing:-0.35px">Impulse Response</div>
<div class="a" style="left:525px;top:666px;width:87px;height:54px;background:#fff;border:2px solid #b0c0c8"></div>
<div class="a" style="left:529px;top:669px;width:80px;height:48px;background:#fff;border:1px solid #3a5564;box-shadow:inset 0 0 0 1px rgba(58,85,100,0.35)"></div>
<svg style="left:531px;top:671px" width="76" height="44"><rect width="76" height="44" fill="#fff"/><line x1="6" y1="7.4" x2="68" y2="7.4" stroke="#eef0f2" stroke-width="0.5"/><line x1="6" y1="10.8" x2="68" y2="10.8" stroke="#eef0f2" stroke-width="0.5"/><line x1="6" y1="14.2" x2="68" y2="14.2" stroke="#eef0f2" stroke-width="0.5"/><line x1="6" y1="17.6" x2="68" y2="17.6" stroke="#eef0f2" stroke-width="0.5"/><line x1="6" y1="21.0" x2="68" y2="21.0" stroke="#eef0f2" stroke-width="0.5"/><line x1="6" y1="24.4" x2="68" y2="24.4" stroke="#eef0f2" stroke-width="0.5"/><line x1="6" y1="27.8" x2="68" y2="27.8" stroke="#eef0f2" stroke-width="0.5"/><line x1="6" y1="31.2" x2="68" y2="31.2" stroke="#eef0f2" stroke-width="0.5"/><line x1="6" y1="34.6" x2="68" y2="34.6" stroke="#eef0f2" stroke-width="0.5"/><line x1="11.2" y1="4" x2="11.2" y2="38" stroke="#eef0f2" stroke-width="0.5"/><line x1="16.3" y1="4" x2="16.3" y2="38" stroke="#eef0f2" stroke-width="0.5"/><line x1="21.5" y1="4" x2="21.5" y2="38" stroke="#eef0f2" stroke-width="0.5"/><line x1="26.7" y1="4" x2="26.7" y2="38" stroke="#eef0f2" stroke-width="0.5"/><line x1="31.8" y1="4" x2="31.8" y2="38" stroke="#eef0f2" stroke-width="0.5"/><line x1="37.0" y1="4" x2="37.0" y2="38" stroke="#eef0f2" stroke-width="0.5"/><line x1="42.2" y1="4" x2="42.2" y2="38" stroke="#eef0f2" stroke-width="0.5"/><line x1="47.3" y1="4" x2="47.3" y2="38" stroke="#eef0f2" stroke-width="0.5"/><line x1="52.5" y1="4" x2="52.5" y2="38" stroke="#eef0f2" stroke-width="0.5"/><line x1="57.7" y1="4" x2="57.7" y2="38" stroke="#eef0f2" stroke-width="0.5"/><line x1="62.8" y1="4" x2="62.8" y2="38" stroke="#eef0f2" stroke-width="0.5"/><rect x="6" y="4" width="62" height="34" fill="none" stroke="#cfd4d8" stroke-width="0.5"/><rect x="2" y="3.6" width="2.5" height="0.9" fill="#c4c8cc"/><rect x="2" y="7.0" width="2.5" height="0.9" fill="#c4c8cc"/><rect x="2" y="10.4" width="2.5" height="0.9" fill="#c4c8cc"/><rect x="2" y="13.8" width="2.5" height="0.9" fill="#c4c8cc"/><rect x="2" y="17.2" width="2.5" height="0.9" fill="#c4c8cc"/><rect x="2" y="20.6" width="2.5" height="0.9" fill="#c4c8cc"/><rect x="2" y="24.0" width="2.5" height="0.9" fill="#c4c8cc"/><rect x="2" y="27.4" width="2.5" height="0.9" fill="#c4c8cc"/><rect x="2" y="30.8" width="2.5" height="0.9" fill="#c4c8cc"/><rect x="2" y="34.2" width="2.5" height="0.9" fill="#c4c8cc"/><rect x="2" y="37.6" width="2.5" height="0.9" fill="#c4c8cc"/><rect x="5.0" y="39.5" width="2" height="0.9" fill="#c4c8cc"/><rect x="10.2" y="39.5" width="2" height="0.9" fill="#c4c8cc"/><rect x="15.3" y="39.5" width="2" height="0.9" fill="#c4c8cc"/><rect x="20.5" y="39.5" width="2" height="0.9" fill="#c4c8cc"/><rect x="25.7" y="39.5" width="2" height="0.9" fill="#c4c8cc"/><rect x="30.8" y="39.5" width="2" height="0.9" fill="#c4c8cc"/><rect x="36.0" y="39.5" width="2" height="0.9" fill="#c4c8cc"/><rect x="41.2" y="39.5" width="2" height="0.9" fill="#c4c8cc"/><rect x="46.3" y="39.5" width="2" height="0.9" fill="#c4c8cc"/><rect x="51.5" y="39.5" width="2" height="0.9" fill="#c4c8cc"/><rect x="56.7" y="39.5" width="2" height="0.9" fill="#c4c8cc"/><rect x="61.8" y="39.5" width="2" height="0.9" fill="#c4c8cc"/><rect x="67.0" y="39.5" width="2" height="0.9" fill="#c4c8cc"/><rect x="43" y="4" width="31" height="34" fill="#e0e0e0"/><line x1="36" y1="22" x2="36" y2="38" stroke="#6070a8" stroke-width="0.7"/></svg>
<div class="t" style="left:268.5px;width:600px;text-align:center;top:720.74px;font-size:12px;line-height:14px;letter-spacing:-0.35px">Energy Time Curve</div>
<div class="a" style="left:649px;top:666px;width:87px;height:54px;background:#fff;border:2px solid #b0c0c8"></div>
<div class="a" style="left:655px;top:669px;width:75px;height:48px;background:#fff;border:1px solid #3a5564;box-shadow:inset 0 0 0 1px rgba(58,85,100,0.35)"></div>
<svg style="left:657px;top:671px" width="71" height="44"><rect width="71" height="44" fill="#fff"/><line x1="6" y1="7.4" x2="63" y2="7.4" stroke="#eef0f2" stroke-width="0.5"/><line x1="6" y1="10.8" x2="63" y2="10.8" stroke="#eef0f2" stroke-width="0.5"/><line x1="6" y1="14.2" x2="63" y2="14.2" stroke="#eef0f2" stroke-width="0.5"/><line x1="6" y1="17.6" x2="63" y2="17.6" stroke="#eef0f2" stroke-width="0.5"/><line x1="6" y1="21.0" x2="63" y2="21.0" stroke="#eef0f2" stroke-width="0.5"/><line x1="6" y1="24.4" x2="63" y2="24.4" stroke="#eef0f2" stroke-width="0.5"/><line x1="6" y1="27.8" x2="63" y2="27.8" stroke="#eef0f2" stroke-width="0.5"/><line x1="6" y1="31.2" x2="63" y2="31.2" stroke="#eef0f2" stroke-width="0.5"/><line x1="6" y1="34.6" x2="63" y2="34.6" stroke="#eef0f2" stroke-width="0.5"/><line x1="10.8" y1="4" x2="10.8" y2="38" stroke="#eef0f2" stroke-width="0.5"/><line x1="15.5" y1="4" x2="15.5" y2="38" stroke="#eef0f2" stroke-width="0.5"/><line x1="20.2" y1="4" x2="20.2" y2="38" stroke="#eef0f2" stroke-width="0.5"/><line x1="25.0" y1="4" x2="25.0" y2="38" stroke="#eef0f2" stroke-width="0.5"/><line x1="29.8" y1="4" x2="29.8" y2="38" stroke="#eef0f2" stroke-width="0.5"/><line x1="34.5" y1="4" x2="34.5" y2="38" stroke="#eef0f2" stroke-width="0.5"/><line x1="39.2" y1="4" x2="39.2" y2="38" stroke="#eef0f2" stroke-width="0.5"/><line x1="44.0" y1="4" x2="44.0" y2="38" stroke="#eef0f2" stroke-width="0.5"/><line x1="48.8" y1="4" x2="48.8" y2="38" stroke="#eef0f2" stroke-width="0.5"/><line x1="53.5" y1="4" x2="53.5" y2="38" stroke="#eef0f2" stroke-width="0.5"/><line x1="58.2" y1="4" x2="58.2" y2="38" stroke="#eef0f2" stroke-width="0.5"/><rect x="6" y="4" width="57" height="34" fill="none" stroke="#cfd4d8" stroke-width="0.5"/><rect x="2" y="3.6" width="2.5" height="0.9" fill="#c4c8cc"/><rect x="2" y="7.0" width="2.5" height="0.9" fill="#c4c8cc"/><rect x="2" y="10.4" width="2.5" height="0.9" fill="#c4c8cc"/><rect x="2" y="13.8" width="2.5" height="0.9" fill="#c4c8cc"/><rect x="2" y="17.2" width="2.5" height="0.9" fill="#c4c8cc"/><rect x="2" y="20.6" width="2.5" height="0.9" fill="#c4c8cc"/><rect x="2" y="24.0" width="2.5" height="0.9" fill="#c4c8cc"/><rect x="2" y="27.4" width="2.5" height="0.9" fill="#c4c8cc"/><rect x="2" y="30.8" width="2.5" height="0.9" fill="#c4c8cc"/><rect x="2" y="34.2" width="2.5" height="0.9" fill="#c4c8cc"/><rect x="2" y="37.6" width="2.5" height="0.9" fill="#c4c8cc"/><rect x="5.0" y="39.5" width="2" height="0.9" fill="#c4c8cc"/><rect x="9.8" y="39.5" width="2" height="0.9" fill="#c4c8cc"/><rect x="14.5" y="39.5" width="2" height="0.9" fill="#c4c8cc"/><rect x="19.2" y="39.5" width="2" height="0.9" fill="#c4c8cc"/><rect x="24.0" y="39.5" width="2" height="0.9" fill="#c4c8cc"/><rect x="28.8" y="39.5" width="2" height="0.9" fill="#c4c8cc"/><rect x="33.5" y="39.5" width="2" height="0.9" fill="#c4c8cc"/><rect x="38.2" y="39.5" width="2" height="0.9" fill="#c4c8cc"/><rect x="43.0" y="39.5" width="2" height="0.9" fill="#c4c8cc"/><rect x="47.8" y="39.5" width="2" height="0.9" fill="#c4c8cc"/><rect x="52.5" y="39.5" width="2" height="0.9" fill="#c4c8cc"/><rect x="57.2" y="39.5" width="2" height="0.9" fill="#c4c8cc"/><rect x="62.0" y="39.5" width="2" height="0.9" fill="#c4c8cc"/><polyline points="6,20 30,20 40,21 55,20 70,20" fill="none" stroke="#a9b7d6" stroke-width="0.8"/></svg>
<div class="t" style="left:392.5px;width:600px;text-align:center;top:720.74px;font-size:12px;line-height:14px;letter-spacing:-0.35px">RMS Level</div>
<div class="a" style="left:773px;top:666px;width:87px;height:54px;background:#fff;border:3px solid #4a6a80"></div>
<div class="a" style="left:776px;top:669px;width:81px;height:48px;background:#fff;border:1px solid #3a5564;box-shadow:inset 0 0 0 1px rgba(58,85,100,0.35)"></div>
<svg style="left:778px;top:671px" width="77" height="44"><rect width="77" height="44" fill="#fff"/><line x1="6" y1="7.4" x2="69" y2="7.4" stroke="#eef0f2" stroke-width="0.5"/><line x1="6" y1="10.8" x2="69" y2="10.8" stroke="#eef0f2" stroke-width="0.5"/><line x1="6" y1="14.2" x2="69" y2="14.2" stroke="#eef0f2" stroke-width="0.5"/><line x1="6" y1="17.6" x2="69" y2="17.6" stroke="#eef0f2" stroke-width="0.5"/><line x1="6" y1="21.0" x2="69" y2="21.0" stroke="#eef0f2" stroke-width="0.5"/><line x1="6" y1="24.4" x2="69" y2="24.4" stroke="#eef0f2" stroke-width="0.5"/><line x1="6" y1="27.8" x2="69" y2="27.8" stroke="#eef0f2" stroke-width="0.5"/><line x1="6" y1="31.2" x2="69" y2="31.2" stroke="#eef0f2" stroke-width="0.5"/><line x1="6" y1="34.6" x2="69" y2="34.6" stroke="#eef0f2" stroke-width="0.5"/><line x1="11.2" y1="4" x2="11.2" y2="38" stroke="#eef0f2" stroke-width="0.5"/><line x1="16.5" y1="4" x2="16.5" y2="38" stroke="#eef0f2" stroke-width="0.5"/><line x1="21.8" y1="4" x2="21.8" y2="38" stroke="#eef0f2" stroke-width="0.5"/><line x1="27.0" y1="4" x2="27.0" y2="38" stroke="#eef0f2" stroke-width="0.5"/><line x1="32.2" y1="4" x2="32.2" y2="38" stroke="#eef0f2" stroke-width="0.5"/><line x1="37.5" y1="4" x2="37.5" y2="38" stroke="#eef0f2" stroke-width="0.5"/><line x1="42.8" y1="4" x2="42.8" y2="38" stroke="#eef0f2" stroke-width="0.5"/><line x1="48.0" y1="4" x2="48.0" y2="38" stroke="#eef0f2" stroke-width="0.5"/><line x1="53.2" y1="4" x2="53.2" y2="38" stroke="#eef0f2" stroke-width="0.5"/><line x1="58.5" y1="4" x2="58.5" y2="38" stroke="#eef0f2" stroke-width="0.5"/><line x1="63.8" y1="4" x2="63.8" y2="38" stroke="#eef0f2" stroke-width="0.5"/><rect x="6" y="4" width="63" height="34" fill="none" stroke="#cfd4d8" stroke-width="0.5"/><rect x="2" y="3.6" width="2.5" height="0.9" fill="#c4c8cc"/><rect x="2" y="7.0" width="2.5" height="0.9" fill="#c4c8cc"/><rect x="2" y="10.4" width="2.5" height="0.9" fill="#c4c8cc"/><rect x="2" y="13.8" width="2.5" height="0.9" fill="#c4c8cc"/><rect x="2" y="17.2" width="2.5" height="0.9" fill="#c4c8cc"/><rect x="2" y="20.6" width="2.5" height="0.9" fill="#c4c8cc"/><rect x="2" y="24.0" width="2.5" height="0.9" fill="#c4c8cc"/><rect x="2" y="27.4" width="2.5" height="0.9" fill="#c4c8cc"/><rect x="2" y="30.8" width="2.5" height="0.9" fill="#c4c8cc"/><rect x="2" y="34.2" width="2.5" height="0.9" fill="#c4c8cc"/><rect x="2" y="37.6" width="2.5" height="0.9" fill="#c4c8cc"/><rect x="5.0" y="39.5" width="2" height="0.9" fill="#c4c8cc"/><rect x="10.2" y="39.5" width="2" height="0.9" fill="#c4c8cc"/><rect x="15.5" y="39.5" width="2" height="0.9" fill="#c4c8cc"/><rect x="20.8" y="39.5" width="2" height="0.9" fill="#c4c8cc"/><rect x="26.0" y="39.5" width="2" height="0.9" fill="#c4c8cc"/><rect x="31.2" y="39.5" width="2" height="0.9" fill="#c4c8cc"/><rect x="36.5" y="39.5" width="2" height="0.9" fill="#c4c8cc"/><rect x="41.8" y="39.5" width="2" height="0.9" fill="#c4c8cc"/><rect x="47.0" y="39.5" width="2" height="0.9" fill="#c4c8cc"/><rect x="52.2" y="39.5" width="2" height="0.9" fill="#c4c8cc"/><rect x="57.5" y="39.5" width="2" height="0.9" fill="#c4c8cc"/><rect x="62.8" y="39.5" width="2" height="0.9" fill="#c4c8cc"/><rect x="68.0" y="39.5" width="2" height="0.9" fill="#c4c8cc"/><polyline points="6,18 12,18 22,20 35,23 45,21 55,18 68,19" fill="none" stroke="#a9b7d6" stroke-width="0.8"/></svg>
<div class="a" style="left:757px;top:719px;width:119px;height:17px;background:#4a6a80"></div>
<div class="t" style="left:516.5px;width:600px;text-align:center;top:720.74px;font-size:12px;line-height:14px;color:#fff;letter-spacing:-0.2px;word-spacing:2px">Relative  Level...</div>
<div class="a" style="left:897px;top:666px;width:87px;height:54px;background:#fff;border:2px solid #b0c0c8"></div>
<div class="a" style="left:900px;top:671px;width:81px;height:44px;background:#fff;border:1px solid #3a5564;box-shadow:inset 0 0 0 1px rgba(58,85,100,0.35)"></div>
<svg style="left:902px;top:673px" width="77" height="40"><rect width="77" height="40" fill="#fff"/><line x1="6" y1="7.0" x2="69" y2="7.0" stroke="#eef0f2" stroke-width="0.5"/><line x1="6" y1="10.0" x2="69" y2="10.0" stroke="#eef0f2" stroke-width="0.5"/><line x1="6" y1="13.0" x2="69" y2="13.0" stroke="#eef0f2" stroke-width="0.5"/><line x1="6" y1="16.0" x2="69" y2="16.0" stroke="#eef0f2" stroke-width="0.5"/><line x1="6" y1="19.0" x2="69" y2="19.0" stroke="#eef0f2" stroke-width="0.5"/><line x1="6" y1="22.0" x2="69" y2="22.0" stroke="#eef0f2" stroke-width="0.5"/><line x1="6" y1="25.0" x2="69" y2="25.0" stroke="#eef0f2" stroke-width="0.5"/><line x1="6" y1="28.0" x2="69" y2="28.0" stroke="#eef0f2" stroke-width="0.5"/><line x1="6" y1="31.0" x2="69" y2="31.0" stroke="#eef0f2" stroke-width="0.5"/><line x1="11.2" y1="4" x2="11.2" y2="34" stroke="#eef0f2" stroke-width="0.5"/><line x1="16.5" y1="4" x2="16.5" y2="34" stroke="#eef0f2" stroke-width="0.5"/><line x1="21.8" y1="4" x2="21.8" y2="34" stroke="#eef0f2" stroke-width="0.5"/><line x1="27.0" y1="4" x2="27.0" y2="34" stroke="#eef0f2" stroke-width="0.5"/><line x1="32.2" y1="4" x2="32.2" y2="34" stroke="#eef0f2" stroke-width="0.5"/><line x1="37.5" y1="4" x2="37.5" y2="34" stroke="#eef0f2" stroke-width="0.5"/><line x1="42.8" y1="4" x2="42.8" y2="34" stroke="#eef0f2" stroke-width="0.5"/><line x1="48.0" y1="4" x2="48.0" y2="34" stroke="#eef0f2" stroke-width="0.5"/><line x1="53.2" y1="4" x2="53.2" y2="34" stroke="#eef0f2" stroke-width="0.5"/><line x1="58.5" y1="4" x2="58.5" y2="34" stroke="#eef0f2" stroke-width="0.5"/><line x1="63.8" y1="4" x2="63.8" y2="34" stroke="#eef0f2" stroke-width="0.5"/><rect x="6" y="4" width="63" height="30" fill="none" stroke="#cfd4d8" stroke-width="0.5"/><rect x="2" y="3.6" width="2.5" height="0.9" fill="#c4c8cc"/><rect x="2" y="6.6" width="2.5" height="0.9" fill="#c4c8cc"/><rect x="2" y="9.6" width="2.5" height="0.9" fill="#c4c8cc"/><rect x="2" y="12.6" width="2.5" height="0.9" fill="#c4c8cc"/><rect x="2" y="15.6" width="2.5" height="0.9" fill="#c4c8cc"/><rect x="2" y="18.6" width="2.5" height="0.9" fill="#c4c8cc"/><rect x="2" y="21.6" width="2.5" height="0.9" fill="#c4c8cc"/><rect x="2" y="24.6" width="2.5" height="0.9" fill="#c4c8cc"/><rect x="2" y="27.6" width="2.5" height="0.9" fill="#c4c8cc"/><rect x="2" y="30.6" width="2.5" height="0.9" fill="#c4c8cc"/><rect x="2" y="33.6" width="2.5" height="0.9" fill="#c4c8cc"/><rect x="5.0" y="35.5" width="2" height="0.9" fill="#c4c8cc"/><rect x="10.2" y="35.5" width="2" height="0.9" fill="#c4c8cc"/><rect x="15.5" y="35.5" width="2" height="0.9" fill="#c4c8cc"/><rect x="20.8" y="35.5" width="2" height="0.9" fill="#c4c8cc"/><rect x="26.0" y="35.5" width="2" height="0.9" fill="#c4c8cc"/><rect x="31.2" y="35.5" width="2" height="0.9" fill="#c4c8cc"/><rect x="36.5" y="35.5" width="2" height="0.9" fill="#c4c8cc"/><rect x="41.8" y="35.5" width="2" height="0.9" fill="#c4c8cc"/><rect x="47.0" y="35.5" width="2" height="0.9" fill="#c4c8cc"/><rect x="52.2" y="35.5" width="2" height="0.9" fill="#c4c8cc"/><rect x="57.5" y="35.5" width="2" height="0.9" fill="#c4c8cc"/><rect x="62.8" y="35.5" width="2" height="0.9" fill="#c4c8cc"/><rect x="68.0" y="35.5" width="2" height="0.9" fill="#c4c8cc"/><rect x="4" y="12" width="6" height="12" fill="#3b579a"/><rect x="68" y="17" width="1.5" height="1.5" fill="#3b579a"/></svg>
<div class="t" style="left:640.5px;width:600px;text-align:center;top:720.74px;font-size:12px;line-height:14px;letter-spacing:0.08px">Deviation (20.0000...</div>
<div class="a" style="left:1021px;top:666px;width:87px;height:54px;background:#fff;border:2px solid #b0c0c8"></div>
<div class="a" style="left:1024px;top:671px;width:81px;height:44px;background:#fff;border:1px solid #3a5564;box-shadow:inset 0 0 0 1px rgba(58,85,100,0.35)"></div>
<svg style="left:1026px;top:673px" width="77" height="40"><rect width="77" height="40" fill="#fff"/><line x1="6" y1="7.0" x2="69" y2="7.0" stroke="#eef0f2" stroke-width="0.5"/><line x1="6" y1="10.0" x2="69" y2="10.0" stroke="#eef0f2" stroke-width="0.5"/><line x1="6" y1="13.0" x2="69" y2="13.0" stroke="#eef0f2" stroke-width="0.5"/><line x1="6" y1="16.0" x2="69" y2="16.0" stroke="#eef0f2" stroke-width="0.5"/><line x1="6" y1="19.0" x2="69" y2="19.0" stroke="#eef0f2" stroke-width="0.5"/><line x1="6" y1="22.0" x2="69" y2="22.0" stroke="#eef0f2" stroke-width="0.5"/><line x1="6" y1="25.0" x2="69" y2="25.0" stroke="#eef0f2" stroke-width="0.5"/><line x1="6" y1="28.0" x2="69" y2="28.0" stroke="#eef0f2" stroke-width="0.5"/><line x1="6" y1="31.0" x2="69" y2="31.0" stroke="#eef0f2" stroke-width="0.5"/><line x1="11.2" y1="4" x2="11.2" y2="34" stroke="#eef0f2" stroke-width="0.5"/><line x1="16.5" y1="4" x2="16.5" y2="34" stroke="#eef0f2" stroke-width="0.5"/><line x1="21.8" y1="4" x2="21.8" y2="34" stroke="#eef0f2" stroke-width="0.5"/><line x1="27.0" y1="4" x2="27.0" y2="34" stroke="#eef0f2" stroke-width="0.5"/><line x1="32.2" y1="4" x2="32.2" y2="34" stroke="#eef0f2" stroke-width="0.5"/><line x1="37.5" y1="4" x2="37.5" y2="34" stroke="#eef0f2" stroke-width="0.5"/><line x1="42.8" y1="4" x2="42.8" y2="34" stroke="#eef0f2" stroke-width="0.5"/><line x1="48.0" y1="4" x2="48.0" y2="34" stroke="#eef0f2" stroke-width="0.5"/><line x1="53.2" y1="4" x2="53.2" y2="34" stroke="#eef0f2" stroke-width="0.5"/><line x1="58.5" y1="4" x2="58.5" y2="34" stroke="#eef0f2" stroke-width="0.5"/><line x1="63.8" y1="4" x2="63.8" y2="34" stroke="#eef0f2" stroke-width="0.5"/><rect x="6" y="4" width="63" height="30" fill="none" stroke="#cfd4d8" stroke-width="0.5"/><rect x="2" y="3.6" width="2.5" height="0.9" fill="#c4c8cc"/><rect x="2" y="6.6" width="2.5" height="0.9" fill="#c4c8cc"/><rect x="2" y="9.6" width="2.5" height="0.9" fill="#c4c8cc"/><rect x="2" y="12.6" width="2.5" height="0.9" fill="#c4c8cc"/><rect x="2" y="15.6" width="2.5" height="0.9" fill="#c4c8cc"/><rect x="2" y="18.6" width="2.5" height="0.9" fill="#c4c8cc"/><rect x="2" y="21.6" width="2.5" height="0.9" fill="#c4c8cc"/><rect x="2" y="24.6" width="2.5" height="0.9" fill="#c4c8cc"/><rect x="2" y="27.6" width="2.5" height="0.9" fill="#c4c8cc"/><rect x="2" y="30.6" width="2.5" height="0.9" fill="#c4c8cc"/><rect x="2" y="33.6" width="2.5" height="0.9" fill="#c4c8cc"/><rect x="5.0" y="35.5" width="2" height="0.9" fill="#c4c8cc"/><rect x="10.2" y="35.5" width="2" height="0.9" fill="#c4c8cc"/><rect x="15.5" y="35.5" width="2" height="0.9" fill="#c4c8cc"/><rect x="20.8" y="35.5" width="2" height="0.9" fill="#c4c8cc"/><rect x="26.0" y="35.5" width="2" height="0.9" fill="#c4c8cc"/><rect x="31.2" y="35.5" width="2" height="0.9" fill="#c4c8cc"/><rect x="36.5" y="35.5" width="2" height="0.9" fill="#c4c8cc"/><rect x="41.8" y="35.5" width="2" height="0.9" fill="#c4c8cc"/><rect x="47.0" y="35.5" width="2" height="0.9" fill="#c4c8cc"/><rect x="52.2" y="35.5" width="2" height="0.9" fill="#c4c8cc"/><rect x="57.5" y="35.5" width="2" height="0.9" fill="#c4c8cc"/><rect x="62.8" y="35.5" width="2" height="0.9" fill="#c4c8cc"/><rect x="68.0" y="35.5" width="2" height="0.9" fill="#c4c8cc"/><line x1="6" y1="18" x2="72" y2="18" stroke="#a9c5e0" stroke-width="0.7" stroke-dasharray="2,1"/></svg>
<svg style="left:1053px;top:684px" width="14" height="14"><circle cx="7" cy="7" r="5.6" fill="none" stroke="#6aaad4" stroke-width="1.5"/><path d="M3.2,3.2 L10.8,10.8" stroke="#6aaad4" stroke-width="1.5"/></svg>
<svg style="left:1087px;top:699px" width="17" height="16"><polygon points="8.5,0.5 16.5,15 0.5,15" fill="#f6c700"/><rect x="7.6" y="5" width="1.9" height="5.5" fill="#111"/><rect x="7.6" y="11.6" width="1.9" height="1.9" fill="#111"/></svg>
<div class="t" style="left:764.5px;width:600px;text-align:center;top:720.74px;font-size:12px;line-height:14px;letter-spacing:-0.35px">Delay</div>
<div class="a" style="left:1145px;top:666px;width:87px;height:54px;background:#fff;border:2px solid #b0c0c8"></div>
<div class="a" style="left:1149px;top:669px;width:80px;height:48px;background:#fff;border:1px solid #3a5564;box-shadow:inset 0 0 0 1px rgba(58,85,100,0.35)"></div>
<svg style="left:1151px;top:671px" width="76" height="44"><rect width="76" height="44" fill="#fff"/><line x1="6" y1="7.4" x2="68" y2="7.4" stroke="#eef0f2" stroke-width="0.5"/><line x1="6" y1="10.8" x2="68" y2="10.8" stroke="#eef0f2" stroke-width="0.5"/><line x1="6" y1="14.2" x2="68" y2="14.2" stroke="#eef0f2" stroke-width="0.5"/><line x1="6" y1="17.6" x2="68" y2="17.6" stroke="#eef0f2" stroke-width="0.5"/><line x1="6" y1="21.0" x2="68" y2="21.0" stroke="#eef0f2" stroke-width="0.5"/><line x1="6" y1="24.4" x2="68" y2="24.4" stroke="#eef0f2" stroke-width="0.5"/><line x1="6" y1="27.8" x2="68" y2="27.8" stroke="#eef0f2" stroke-width="0.5"/><line x1="6" y1="31.2" x2="68" y2="31.2" stroke="#eef0f2" stroke-width="0.5"/><line x1="6" y1="34.6" x2="68" y2="34.6" stroke="#eef0f2" stroke-width="0.5"/><line x1="11.2" y1="4" x2="11.2" y2="38" stroke="#eef0f2" stroke-width="0.5"/><line x1="16.3" y1="4" x2="16.3" y2="38" stroke="#eef0f2" stroke-width="0.5"/><line x1="21.5" y1="4" x2="21.5" y2="38" stroke="#eef0f2" stroke-width="0.5"/><line x1="26.7" y1="4" x2="26.7" y2="38" stroke="#eef0f2" stroke-width="0.5"/><line x1="31.8" y1="4" x2="31.8" y2="38" stroke="#eef0f2" stroke-width="0.5"/><line x1="37.0" y1="4" x2="37.0" y2="38" stroke="#eef0f2" stroke-width="0.5"/><line x1="42.2" y1="4" x2="42.2" y2="38" stroke="#eef0f2" stroke-width="0.5"/><line x1="47.3" y1="4" x2="47.3" y2="38" stroke="#eef0f2" stroke-width="0.5"/><line x1="52.5" y1="4" x2="52.5" y2="38" stroke="#eef0f2" stroke-width="0.5"/><line x1="57.7" y1="4" x2="57.7" y2="38" stroke="#eef0f2" stroke-width="0.5"/><line x1="62.8" y1="4" x2="62.8" y2="38" stroke="#eef0f2" stroke-width="0.5"/><rect x="6" y="4" width="62" height="34" fill="none" stroke="#cfd4d8" stroke-width="0.5"/><rect x="2" y="3.6" width="2.5" height="0.9" fill="#c4c8cc"/><rect x="2" y="7.0" width="2.5" height="0.9" fill="#c4c8cc"/><rect x="2" y="10.4" width="2.5" height="0.9" fill="#c4c8cc"/><rect x="2" y="13.8" width="2.5" height="0.9" fill="#c4c8cc"/><rect x="2" y="17.2" width="2.5" height="0.9" fill="#c4c8cc"/><rect x="2" y="20.6" width="2.5" height="0.9" fill="#c4c8cc"/><rect x="2" y="24.0" width="2.5" height="0.9" fill="#c4c8cc"/><rect x="2" y="27.4" width="2.5" height="0.9" fill="#c4c8cc"/><rect x="2" y="30.8" width="2.5" height="0.9" fill="#c4c8cc"/><rect x="2" y="34.2" width="2.5" height="0.9" fill="#c4c8cc"/><rect x="2" y="37.6" width="2.5" height="0.9" fill="#c4c8cc"/><rect x="5.0" y="39.5" width="2" height="0.9" fill="#c4c8cc"/><rect x="10.2" y="39.5" width="2" height="0.9" fill="#c4c8cc"/><rect x="15.3" y="39.5" width="2" height="0.9" fill="#c4c8cc"/><rect x="20.5" y="39.5" width="2" height="0.9" fill="#c4c8cc"/><rect x="25.7" y="39.5" width="2" height="0.9" fill="#c4c8cc"/><rect x="30.8" y="39.5" width="2" height="0.9" fill="#c4c8cc"/><rect x="36.0" y="39.5" width="2" height="0.9" fill="#c4c8cc"/><rect x="41.2" y="39.5" width="2" height="0.9" fill="#c4c8cc"/><rect x="46.3" y="39.5" width="2" height="0.9" fill="#c4c8cc"/><rect x="51.5" y="39.5" width="2" height="0.9" fill="#c4c8cc"/><rect x="56.7" y="39.5" width="2" height="0.9" fill="#c4c8cc"/><rect x="61.8" y="39.5" width="2" height="0.9" fill="#c4c8cc"/><rect x="67.0" y="39.5" width="2" height="0.9" fill="#c4c8cc"/><line x1="6" y1="18" x2="72" y2="18" stroke="#a9c5e0" stroke-width="0.7" stroke-dasharray="2,1"/></svg>
<svg style="left:1182px;top:685px" width="14" height="14"><circle cx="7" cy="7" r="5.6" fill="none" stroke="#6aaad4" stroke-width="1.5"/><path d="M3.2,3.2 L10.8,10.8" stroke="#6aaad4" stroke-width="1.5"/></svg>
<svg style="left:1211px;top:699px" width="17" height="16"><polygon points="8.5,0.5 16.5,15 0.5,15" fill="#f6c700"/><rect x="7.6" y="5" width="1.9" height="5.5" fill="#111"/><rect x="7.6" y="11.6" width="1.9" height="1.9" fill="#111"/></svg>
<div class="t" style="left:888.5px;width:600px;text-align:center;top:720.74px;font-size:12px;line-height:14px;letter-spacing:-0.35px">Phase</div>
<div class="a" style="left:1269px;top:666px;width:87px;height:54px;background:#fff;border:2px solid #b0c0c8"></div>
<div class="a" style="left:1273px;top:669px;width:80px;height:48px;background:#fff;border:1px solid #3a5564;box-shadow:inset 0 0 0 1px rgba(58,85,100,0.35)"></div>
<svg style="left:1275px;top:671px" width="76" height="44"><rect width="76" height="44" fill="#fff"/><line x1="6" y1="7.4" x2="68" y2="7.4" stroke="#eef0f2" stroke-width="0.5"/><line x1="6" y1="10.8" x2="68" y2="10.8" stroke="#eef0f2" stroke-width="0.5"/><line x1="6" y1="14.2" x2="68" y2="14.2" stroke="#eef0f2" stroke-width="0.5"/><line x1="6" y1="17.6" x2="68" y2="17.6" stroke="#eef0f2" stroke-width="0.5"/><line x1="6" y1="21.0" x2="68" y2="21.0" stroke="#eef0f2" stroke-width="0.5"/><line x1="6" y1="24.4" x2="68" y2="24.4" stroke="#eef0f2" stroke-width="0.5"/><line x1="6" y1="27.8" x2="68" y2="27.8" stroke="#eef0f2" stroke-width="0.5"/><line x1="6" y1="31.2" x2="68" y2="31.2" stroke="#eef0f2" stroke-width="0.5"/><line x1="6" y1="34.6" x2="68" y2="34.6" stroke="#eef0f2" stroke-width="0.5"/><line x1="11.2" y1="4" x2="11.2" y2="38" stroke="#eef0f2" stroke-width="0.5"/><line x1="16.3" y1="4" x2="16.3" y2="38" stroke="#eef0f2" stroke-width="0.5"/><line x1="21.5" y1="4" x2="21.5" y2="38" stroke="#eef0f2" stroke-width="0.5"/><line x1="26.7" y1="4" x2="26.7" y2="38" stroke="#eef0f2" stroke-width="0.5"/><line x1="31.8" y1="4" x2="31.8" y2="38" stroke="#eef0f2" stroke-width="0.5"/><line x1="37.0" y1="4" x2="37.0" y2="38" stroke="#eef0f2" stroke-width="0.5"/><line x1="42.2" y1="4" x2="42.2" y2="38" stroke="#eef0f2" stroke-width="0.5"/><line x1="47.3" y1="4" x2="47.3" y2="38" stroke="#eef0f2" stroke-width="0.5"/><line x1="52.5" y1="4" x2="52.5" y2="38" stroke="#eef0f2" stroke-width="0.5"/><line x1="57.7" y1="4" x2="57.7" y2="38" stroke="#eef0f2" stroke-width="0.5"/><line x1="62.8" y1="4" x2="62.8" y2="38" stroke="#eef0f2" stroke-width="0.5"/><rect x="6" y="4" width="62" height="34" fill="none" stroke="#cfd4d8" stroke-width="0.5"/><rect x="2" y="3.6" width="2.5" height="0.9" fill="#c4c8cc"/><rect x="2" y="7.0" width="2.5" height="0.9" fill="#c4c8cc"/><rect x="2" y="10.4" width="2.5" height="0.9" fill="#c4c8cc"/><rect x="2" y="13.8" width="2.5" height="0.9" fill="#c4c8cc"/><rect x="2" y="17.2" width="2.5" height="0.9" fill="#c4c8cc"/><rect x="2" y="20.6" width="2.5" height="0.9" fill="#c4c8cc"/><rect x="2" y="24.0" width="2.5" height="0.9" fill="#c4c8cc"/><rect x="2" y="27.4" width="2.5" height="0.9" fill="#c4c8cc"/><rect x="2" y="30.8" width="2.5" height="0.9" fill="#c4c8cc"/><rect x="2" y="34.2" width="2.5" height="0.9" fill="#c4c8cc"/><rect x="2" y="37.6" width="2.5" height="0.9" fill="#c4c8cc"/><rect x="5.0" y="39.5" width="2" height="0.9" fill="#c4c8cc"/><rect x="10.2" y="39.5" width="2" height="0.9" fill="#c4c8cc"/><rect x="15.3" y="39.5" width="2" height="0.9" fill="#c4c8cc"/><rect x="20.5" y="39.5" width="2" height="0.9" fill="#c4c8cc"/><rect x="25.7" y="39.5" width="2" height="0.9" fill="#c4c8cc"/><rect x="30.8" y="39.5" width="2" height="0.9" fill="#c4c8cc"/><rect x="36.0" y="39.5" width="2" height="0.9" fill="#c4c8cc"/><rect x="41.2" y="39.5" width="2" height="0.9" fill="#c4c8cc"/><rect x="46.3" y="39.5" width="2" height="0.9" fill="#c4c8cc"/><rect x="51.5" y="39.5" width="2" height="0.9" fill="#c4c8cc"/><rect x="56.7" y="39.5" width="2" height="0.9" fill="#c4c8cc"/><rect x="61.8" y="39.5" width="2" height="0.9" fill="#c4c8cc"/><rect x="67.0" y="39.5" width="2" height="0.9" fill="#c4c8cc"/><polyline points="6,8 9,16 11,12 13,18 16,17 72,18" fill="none" stroke="#a9c5e0" stroke-width="0.7"/></svg>
<svg style="left:1306px;top:685px" width="14" height="14"><circle cx="7" cy="7" r="5.6" fill="none" stroke="#6aaad4" stroke-width="1.5"/><path d="M3.2,3.2 L10.8,10.8" stroke="#6aaad4" stroke-width="1.5"/></svg>
<svg style="left:1335px;top:699px" width="17" height="16"><polygon points="8.5,0.5 16.5,15 0.5,15" fill="#f6c700"/><rect x="7.6" y="5" width="1.9" height="5.5" fill="#111"/><rect x="7.6" y="11.6" width="1.9" height="1.9" fill="#111"/></svg>
<div class="t" style="left:1012.5px;width:600px;text-align:center;top:720.74px;font-size:12px;line-height:14px;letter-spacing:-0.35px">Group Delay</div>
<div class="a" style="left:1393px;top:666px;width:19px;height:54px;background:#fff;border:2px solid #b0c0c8;border-right:none"></div>
<div class="a" style="left:1397px;top:669px;width:15px;height:48px;background:#fff;border:1px solid #3a5564;border-right:none;box-shadow:inset 0 0 0 1px rgba(58,85,100,0.35)"></div>
<svg style="left:1399px;top:671px" width="13" height="44"><g stroke="#eef0f2" stroke-width="0.5"><line x1="5" y1="4.0" x2="13" y2="4.0"/><line x1="5" y1="7.5" x2="13" y2="7.5"/><line x1="5" y1="11.0" x2="13" y2="11.0"/><line x1="5" y1="14.5" x2="13" y2="14.5"/><line x1="5" y1="18.0" x2="13" y2="18.0"/><line x1="5" y1="21.5" x2="13" y2="21.5"/><line x1="5" y1="25.0" x2="13" y2="25.0"/><line x1="5" y1="28.5" x2="13" y2="28.5"/><line x1="5" y1="32.0" x2="13" y2="32.0"/><line x1="5" y1="35.5" x2="13" y2="35.5"/><line x1="5" y1="39.0" x2="13" y2="39.0"/></g><line x1="5" y1="3" x2="5" y2="40" stroke="#cfd4d8" stroke-width="0.5"/><rect x="1" y="3.6" width="2.5" height="0.9" fill="#c4c8cc"/><rect x="1" y="7.1" width="2.5" height="0.9" fill="#c4c8cc"/><rect x="1" y="10.6" width="2.5" height="0.9" fill="#c4c8cc"/><rect x="1" y="14.1" width="2.5" height="0.9" fill="#c4c8cc"/><rect x="1" y="17.6" width="2.5" height="0.9" fill="#c4c8cc"/><rect x="1" y="21.1" width="2.5" height="0.9" fill="#c4c8cc"/><rect x="1" y="24.6" width="2.5" height="0.9" fill="#c4c8cc"/><rect x="1" y="28.1" width="2.5" height="0.9" fill="#c4c8cc"/><rect x="1" y="31.6" width="2.5" height="0.9" fill="#c4c8cc"/><rect x="1" y="35.1" width="2.5" height="0.9" fill="#c4c8cc"/><rect x="1" y="38.6" width="2.5" height="0.9" fill="#c4c8cc"/><line x1="5" y1="24" x2="13" y2="24" stroke="#a9c5e0" stroke-width="0.7"/></svg>
<div class="t" style="left:1384.7px;top:720.74px;font-size:12px;line-height:14px;letter-spacing:-0.35px">Level</div>
<div class="a" style="left:380px;top:741px;width:1032px;height:15px;background:#f0f0f0"></div>
<div class="a" style="left:397px;top:741px;width:361px;height:15px;background:#cdcdcd"></div>
<svg style="left:384px;top:744px" width="6" height="9"><polyline points="5,0.8 1.2,4.5 5,8.2" fill="none" stroke="#555" stroke-width="1.6"/></svg>
<svg style="left:1401px;top:744px" width="6" height="9"><polyline points="1,0.8 4.8,4.5 1,8.2" fill="none" stroke="#555" stroke-width="1.6"/></svg>
<div class="a" style="left:380px;top:757px;width:1032px;height:7px;background:#4a6a80"></div>
<svg style="left:888px;top:758px" width="20" height="5"><circle cx="3" cy="2.5" r="1.4" fill="#c8d2d8"/><circle cx="9" cy="2.5" r="1.4" fill="#c8d2d8"/><circle cx="15" cy="2.5" r="1.4" fill="#c8d2d8"/></svg>
<div class="a" style="left:380px;top:764px;width:1032px;height:25px;background:#dce3e7"></div>
<div class="a" style="left:380px;top:789px;width:1032px;height:1px;background:#a8a8a8"></div>
<div class="t" style="left:383.8px;top:768.54px;font-size:12px;line-height:14px;letter-spacing:-0.6px">Data Sets</div>
<div class="a" style="left:438px;top:768px;width:1px;height:17px;background:#b3bbbf"></div>
<div class="a" style="left:439px;top:768px;width:1px;height:17px;background:#f4f6f7"></div>
<svg style="left:446px;top:770px" width="12" height="12"><rect x="0" y="0" width="12" height="12" rx="1.5" fill="#3a5e80"/><polyline points="2.6,6.2 5,8.8 9.6,3" fill="none" stroke="#fff" stroke-width="1.6"/></svg>
<svg style="left:469px;top:770px" width="12" height="12"><rect x="1" y="1" width="10" height="10" rx="1.5" fill="#fff" stroke="#2d4e6e" stroke-width="2"/></svg>
<div class="a" style="left:490px;top:768px;width:1px;height:17px;background:#b3bbbf"></div>
<div class="a" style="left:491px;top:768px;width:1px;height:17px;background:#f4f6f7"></div>
<svg style="left:495px;top:768px" width="16" height="16"><rect width="16" height="16" fill="#263f52"/><rect x="1" y="4" width="14" height="10" fill="#c9d2d8" shape-rendering="crispEdges"/><g shape-rendering="crispEdges"><rect x="2" y="5" width="2" height="2" fill="#263f52"/><rect x="5" y="5" width="2" height="2" fill="#263f52"/><rect x="8" y="5" width="2" height="2" fill="#263f52"/><rect x="11" y="5" width="2" height="2" fill="#263f52"/><rect x="2" y="8" width="2" height="2" fill="#263f52"/><rect x="5" y="8" width="2" height="2" fill="#263f52"/><rect x="8" y="8" width="2" height="2" fill="#263f52"/><rect x="11" y="8" width="2" height="2" fill="#263f52"/><rect x="2" y="11" width="2" height="2" fill="#263f52"/><rect x="5" y="11" width="2" height="2" fill="#263f52"/><rect x="8" y="11" width="2" height="2" fill="#263f52"/><rect x="11" y="11" width="2" height="2" fill="#263f52"/></g><rect x="7.5" y="7.5" width="8" height="8" fill="#263f52"/><path d="M8.8,8.8 L13.8,13.8 M13.8,8.8 L8.8,13.8" stroke="#fff" stroke-width="2"/></svg>
<div class="t" style="left:514.4px;top:768.84px;font-size:12px;line-height:14px;letter-spacing:-0.3px">Clear Data</div>
<svg style="left:573.5px;top:774px" width="6" height="4"><polygon points="0,0 5.5,0 2.75,3.2" fill="#000"/></svg>
<svg style="left:585px;top:768px" width="16" height="16"><rect width="16" height="16" fill="#263f52"/><rect x="1" y="4" width="14" height="10" fill="#c9d2d8" shape-rendering="crispEdges"/><g shape-rendering="crispEdges"><rect x="2" y="5" width="2" height="2" fill="#263f52"/><rect x="5" y="5" width="2" height="2" fill="#263f52"/><rect x="8" y="5" width="2" height="2" fill="#263f52"/><rect x="11" y="5" width="2" height="2" fill="#263f52"/><rect x="2" y="8" width="2" height="2" fill="#263f52"/><rect x="5" y="8" width="2" height="2" fill="#263f52"/><rect x="8" y="8" width="2" height="2" fill="#263f52"/><rect x="11" y="8" width="2" height="2" fill="#263f52"/><rect x="2" y="11" width="2" height="2" fill="#263f52"/><rect x="5" y="11" width="2" height="2" fill="#263f52"/><rect x="8" y="11" width="2" height="2" fill="#263f52"/><rect x="11" y="11" width="2" height="2" fill="#263f52"/></g><rect x="0" y="7" width="11" height="8.5" fill="#263f52"/><path d="M0,11 H6" stroke="#fff" stroke-width="2"/><polygon points="5.5,7.5 9.5,11 5.5,14.5" fill="#fff"/></svg>
<div class="t" style="left:604px;top:768.84px;font-size:12px;line-height:14px;">Import</div>
<svg style="left:648px;top:768px" width="16" height="16"><rect width="16" height="16" fill="#263f52"/><rect x="1" y="4" width="14" height="10" fill="#c9d2d8" shape-rendering="crispEdges"/><g shape-rendering="crispEdges"><rect x="2" y="5" width="2" height="2" fill="#263f52"/><rect x="5" y="5" width="2" height="2" fill="#263f52"/><rect x="8" y="5" width="2" height="2" fill="#263f52"/><rect x="11" y="5" width="2" height="2" fill="#263f52"/><rect x="2" y="8" width="2" height="2" fill="#263f52"/><rect x="5" y="8" width="2" height="2" fill="#263f52"/><rect x="8" y="8" width="2" height="2" fill="#263f52"/><rect x="11" y="8" width="2" height="2" fill="#263f52"/><rect x="2" y="11" width="2" height="2" fill="#263f52"/><rect x="5" y="11" width="2" height="2" fill="#263f52"/><rect x="8" y="11" width="2" height="2" fill="#263f52"/><rect x="11" y="11" width="2" height="2" fill="#263f52"/></g><rect x="6" y="7" width="10" height="8.5" fill="#263f52"/><path d="M7,11 H12" stroke="#fff" stroke-width="2"/><polygon points="11.5,7.5 15.5,11 11.5,14.5" fill="#fff"/></svg>
<div class="t" style="left:667px;top:768.84px;font-size:12px;line-height:14px;letter-spacing:-0.2px">Export</div>
<svg style="left:706.5px;top:774px" width="6" height="4"><polygon points="0,0 5.5,0 2.75,3.2" fill="#000"/></svg>
<svg style="left:718px;top:768px" width="16" height="16"><rect width="16" height="16" fill="#263f52"/><polygon points="12.35,6.72 13.88,6.71 13.88,9.09 12.35,9.08 11.88,10.21 12.97,11.29 11.29,12.97 10.21,11.88 9.08,12.35 9.09,13.88 6.71,13.88 6.72,12.35 5.59,11.88 4.51,12.97 2.83,11.29 3.92,10.21 3.45,9.08 1.92,9.09 1.92,6.71 3.45,6.72 3.92,5.59 2.83,4.51 4.51,2.83 5.59,3.92 6.72,3.45 6.71,1.92 9.09,1.92 9.08,3.45 10.21,3.92 11.29,2.83 12.97,4.51 11.88,5.59" fill="#fff"/><circle cx="7.9" cy="7.9" r="4.5" fill="#fff"/><circle cx="7.9" cy="7.9" r="2" fill="#263f52"/></svg>
<div class="t" style="left:737.3px;top:768.84px;font-size:12px;line-height:14px;letter-spacing:-0.3px">Data Settings</div>
<svg style="left:1392px;top:771px" width="14" height="11"><rect x="5" y="0" width="3" height="3" fill="#2c4f78"/><polygon points="2.5,2.5 10.5,2.5 6.5,6.3" fill="#2c4f78"/><rect x="0" y="8" width="13" height="2" fill="#2c4f78"/></svg>
<div class="a" style="left:380px;top:790px;width:1032px;height:93px;background:#f0f0f0"></div>
<div class="a" style="left:380px;top:790px;width:998px;height:23px;background:#f0f0f0"></div>
<div class="a" style="left:380px;top:813px;width:998px;height:1px;background:#a0a0a0"></div>
<div class="a" style="left:380px;top:814px;width:998px;height:22px;background:#fff"></div>
<div class="a" style="left:380px;top:836px;width:998px;height:1px;background:#d9d9d9"></div>
<div class="a" style="left:1377px;top:790px;width:1px;height:47px;background:#d0d0d0"></div>
<div class="a" style="left:403px;top:791px;width:1px;height:45px;background:#a0a0a0"></div>
<div class="a" style="left:487px;top:791px;width:1px;height:45px;background:#a0a0a0"></div>
<div class="a" style="left:653px;top:791px;width:1px;height:45px;background:#a0a0a0"></div>
<div class="a" style="left:403px;top:814px;width:1px;height:22px;background:#d0d0d0"></div>
<div class="a" style="left:487px;top:814px;width:1px;height:22px;background:#d0d0d0"></div>
<div class="a" style="left:653px;top:814px;width:1px;height:22px;background:#d0d0d0"></div>
<div class="t" style="left:145px;width:600px;text-align:center;top:797.34px;font-size:12px;line-height:14px;letter-spacing:-0.3px">Data Set</div>
<div class="t" style="left:270.5px;width:600px;text-align:center;top:797.34px;font-size:12px;line-height:14px;letter-spacing:-0.3px">Time</div>
<div class="t" style="left:715.5px;width:600px;text-align:center;top:797.34px;font-size:12px;line-height:14px;letter-spacing:-0.3px">Notes</div>
<div class="a" style="left:382px;top:816px;width:13px;height:13px;background:#eaeaea;border:1px solid #8a8a8a;border-right-color:#cfcfcf;border-bottom-color:#cfcfcf"></div>
<svg style="left:384px;top:818px" width="10" height="9"><polyline points="1,4.5 3.6,7.3 8.8,1.2" fill="none" stroke="#9a9a9a" stroke-width="1.3"/></svg>
<div class="t" style="left:406.4px;top:815.84px;font-size:12px;line-height:14px;letter-spacing:-0.3px">Measured 1</div>
<div class="t" style="left:490.4px;top:815.84px;font-size:12px;line-height:14px;letter-spacing:0.27px">10/27/2021 10:24:37 AM</div>
<div class="a" style="left:379px;top:595px;width:1px;height:288px;background:#b5c6ce"></div>
</body></html>
